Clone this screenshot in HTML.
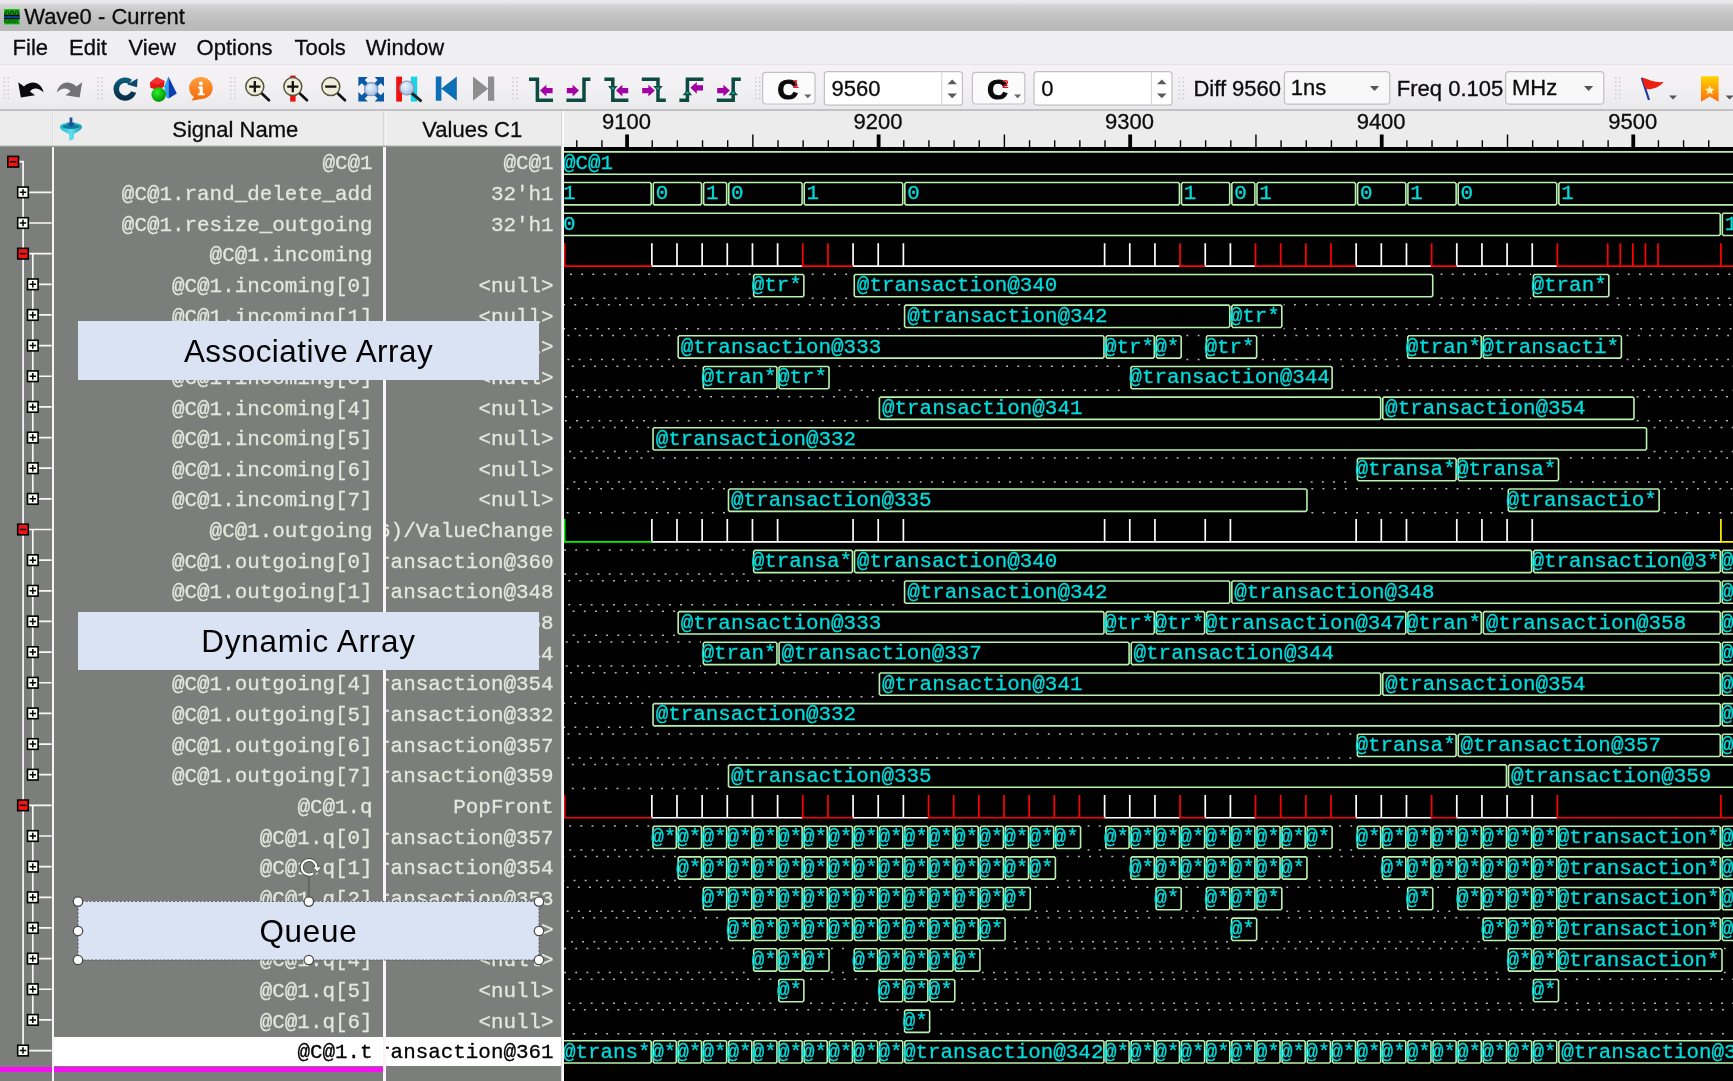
<!DOCTYPE html>
<html lang="en"><head><meta charset="utf-8"><title>Wave0 - Current</title>
<style>
html,body{margin:0;padding:0}
body{width:1733px;height:1081px;overflow:hidden;position:relative;background:#efeff1;font-family:"Liberation Sans", sans-serif;}
#app{position:absolute;left:0;top:0;width:1733px;height:1081px;overflow:hidden;will-change:transform;opacity:0.999}
.ui{position:absolute;font-family:"Liberation Sans", sans-serif;font-size:22px;line-height:25px;color:#0c0c0c;white-space:nowrap;-webkit-text-stroke:0.3px #0c0c0c}
.nm{position:absolute;left:54px;width:318.6px;text-align:right;font-family:"Liberation Mono", monospace;font-size:20.9px;line-height:25px;white-space:nowrap;height:25px;-webkit-text-stroke:0.3px currentColor}
.vl{position:absolute;left:385.8px;width:167.8px;height:25px;overflow:hidden;font-family:"Liberation Mono", monospace;font-size:20.9px;line-height:25px;white-space:nowrap;-webkit-text-stroke:0.3px currentColor}
.vl span{position:absolute;right:0;top:0}
.ann{position:absolute;left:78px;width:461px;background:#dae3f3;color:#000;text-align:center;font-family:"Liberation Sans", sans-serif;white-space:nowrap}
</style></head><body><div id="app">
<div style="position:absolute;left:0;top:0;width:1733px;height:31px;background:linear-gradient(180deg,#edeaee 0px,#e7e5e9 2.5px,#d3d3d4 5.5px,#c7c7c8 12px,#bcbcbd 22px,#b9b9ba 31px)"></div>
<div class="ui" style="left:24.2px;top:4.2px">Wave0 - Current</div>
<svg width="16" height="16" viewBox="0 0 16 16" style="position:absolute;left:4px;top:8.6px">
<rect x="0" y="0" width="15.6" height="15.4" fill="#12c812"/>
<path d="M0 4.4H2.2V2.2H4.6V4.4H6.9V2.2H9.3V4.4H11.6V2.2H14V4.4H15.6" fill="none" stroke="#0a5a0a" stroke-width="1.5"/>
<rect x="0" y="5.6" width="15.6" height="4.8" fill="#050a18"/>
<rect x="0" y="7.5" width="15.6" height="1.1" fill="#1f6cff"/>
<path d="M0.6 13.8V11.6H2.4V13.8H4.2V11.6H6V13.8H7.8V11.6H9.6V13.8H11.4V11.6H13.2V13.8H15" fill="none" stroke="#0a6a0a" stroke-width="1.3"/>
</svg>
<div style="position:absolute;left:0;top:31px;width:1733px;height:33.4px;background:#efeff1"></div>
<div class="ui" style="left:12.6px;top:34.8px">File</div>
<div class="ui" style="left:69px;top:34.8px">Edit</div>
<div class="ui" style="left:128.6px;top:34.8px">View</div>
<div class="ui" style="left:196.6px;top:34.8px">Options</div>
<div class="ui" style="left:294.4px;top:34.8px">Tools</div>
<div class="ui" style="left:365.8px;top:34.8px">Window</div>
<div style="position:absolute;left:0;top:64.4px;width:1733px;height:45.4px;background:linear-gradient(180deg,#dedde0 0,#f5f2f5 1.6px,#f3f1f4 40%,#eaeaec 100%)"></div>
<svg width="1733" height="46" viewBox="0 64 1733 46" style="position:absolute;left:0;top:64px"><defs>
<linearGradient id="og" x1="0" y1="0" x2="0" y2="1"><stop offset="0" stop-color="#ffa040"/><stop offset="1" stop-color="#f26a0c"/></linearGradient>
<linearGradient id="bk" x1="0" y1="0" x2="0" y2="1"><stop offset="0" stop-color="#ffd400"/><stop offset="0.55" stop-color="#ff9a08"/><stop offset="1" stop-color="#ff6a10"/></linearGradient>
<radialGradient id="gs" cx="0.4" cy="0.35" r="0.7"><stop offset="0" stop-color="#2cf02c"/><stop offset="1" stop-color="#008a00"/></radialGradient>
<radialGradient id="gl" cx="0.4" cy="0.35" r="0.8"><stop offset="0" stop-color="#eef6ff"/><stop offset="1" stop-color="#8fb4e0"/></radialGradient>
<linearGradient id="rf" x1="0" y1="0" x2="0" y2="1"><stop offset="0" stop-color="#0b5a78"/><stop offset="1" stop-color="#082e48"/></linearGradient>
</defs><g fill="#cbcbce"><rect x="3.6" y="77.2" width="1.5" height="1.5"/><rect x="7.6" y="77.2" width="1.5" height="1.5"/><rect x="3.6" y="81.3" width="1.5" height="1.5"/><rect x="7.6" y="81.3" width="1.5" height="1.5"/><rect x="3.6" y="85.4" width="1.5" height="1.5"/><rect x="7.6" y="85.4" width="1.5" height="1.5"/><rect x="3.6" y="89.5" width="1.5" height="1.5"/><rect x="7.6" y="89.5" width="1.5" height="1.5"/><rect x="3.6" y="93.6" width="1.5" height="1.5"/><rect x="7.6" y="93.6" width="1.5" height="1.5"/><rect x="3.6" y="97.7" width="1.5" height="1.5"/><rect x="7.6" y="97.7" width="1.5" height="1.5"/></g><g fill="#cbcbce"><rect x="97.4" y="77.2" width="1.5" height="1.5"/><rect x="101.4" y="77.2" width="1.5" height="1.5"/><rect x="97.4" y="81.3" width="1.5" height="1.5"/><rect x="101.4" y="81.3" width="1.5" height="1.5"/><rect x="97.4" y="85.4" width="1.5" height="1.5"/><rect x="101.4" y="85.4" width="1.5" height="1.5"/><rect x="97.4" y="89.5" width="1.5" height="1.5"/><rect x="101.4" y="89.5" width="1.5" height="1.5"/><rect x="97.4" y="93.6" width="1.5" height="1.5"/><rect x="101.4" y="93.6" width="1.5" height="1.5"/><rect x="97.4" y="97.7" width="1.5" height="1.5"/><rect x="101.4" y="97.7" width="1.5" height="1.5"/></g><g fill="#cbcbce"><rect x="230" y="77.2" width="1.5" height="1.5"/><rect x="234" y="77.2" width="1.5" height="1.5"/><rect x="230" y="81.3" width="1.5" height="1.5"/><rect x="234" y="81.3" width="1.5" height="1.5"/><rect x="230" y="85.4" width="1.5" height="1.5"/><rect x="234" y="85.4" width="1.5" height="1.5"/><rect x="230" y="89.5" width="1.5" height="1.5"/><rect x="234" y="89.5" width="1.5" height="1.5"/><rect x="230" y="93.6" width="1.5" height="1.5"/><rect x="234" y="93.6" width="1.5" height="1.5"/><rect x="230" y="97.7" width="1.5" height="1.5"/><rect x="234" y="97.7" width="1.5" height="1.5"/></g><g fill="#cbcbce"><rect x="512.4" y="77.2" width="1.5" height="1.5"/><rect x="516.4" y="77.2" width="1.5" height="1.5"/><rect x="512.4" y="81.3" width="1.5" height="1.5"/><rect x="516.4" y="81.3" width="1.5" height="1.5"/><rect x="512.4" y="85.4" width="1.5" height="1.5"/><rect x="516.4" y="85.4" width="1.5" height="1.5"/><rect x="512.4" y="89.5" width="1.5" height="1.5"/><rect x="516.4" y="89.5" width="1.5" height="1.5"/><rect x="512.4" y="93.6" width="1.5" height="1.5"/><rect x="516.4" y="93.6" width="1.5" height="1.5"/><rect x="512.4" y="97.7" width="1.5" height="1.5"/><rect x="516.4" y="97.7" width="1.5" height="1.5"/></g><g fill="#cbcbce"><rect x="755" y="77.2" width="1.5" height="1.5"/><rect x="759" y="77.2" width="1.5" height="1.5"/><rect x="755" y="81.3" width="1.5" height="1.5"/><rect x="759" y="81.3" width="1.5" height="1.5"/><rect x="755" y="85.4" width="1.5" height="1.5"/><rect x="759" y="85.4" width="1.5" height="1.5"/><rect x="755" y="89.5" width="1.5" height="1.5"/><rect x="759" y="89.5" width="1.5" height="1.5"/><rect x="755" y="93.6" width="1.5" height="1.5"/><rect x="759" y="93.6" width="1.5" height="1.5"/><rect x="755" y="97.7" width="1.5" height="1.5"/><rect x="759" y="97.7" width="1.5" height="1.5"/></g><g fill="#cbcbce"><rect x="1178.6" y="77.2" width="1.5" height="1.5"/><rect x="1182.6" y="77.2" width="1.5" height="1.5"/><rect x="1178.6" y="81.3" width="1.5" height="1.5"/><rect x="1182.6" y="81.3" width="1.5" height="1.5"/><rect x="1178.6" y="85.4" width="1.5" height="1.5"/><rect x="1182.6" y="85.4" width="1.5" height="1.5"/><rect x="1178.6" y="89.5" width="1.5" height="1.5"/><rect x="1182.6" y="89.5" width="1.5" height="1.5"/><rect x="1178.6" y="93.6" width="1.5" height="1.5"/><rect x="1182.6" y="93.6" width="1.5" height="1.5"/><rect x="1178.6" y="97.7" width="1.5" height="1.5"/><rect x="1182.6" y="97.7" width="1.5" height="1.5"/></g><g fill="#cbcbce"><rect x="1615" y="77.2" width="1.5" height="1.5"/><rect x="1619" y="77.2" width="1.5" height="1.5"/><rect x="1615" y="81.3" width="1.5" height="1.5"/><rect x="1619" y="81.3" width="1.5" height="1.5"/><rect x="1615" y="85.4" width="1.5" height="1.5"/><rect x="1619" y="85.4" width="1.5" height="1.5"/><rect x="1615" y="89.5" width="1.5" height="1.5"/><rect x="1619" y="89.5" width="1.5" height="1.5"/><rect x="1615" y="93.6" width="1.5" height="1.5"/><rect x="1619" y="93.6" width="1.5" height="1.5"/><rect x="1615" y="97.7" width="1.5" height="1.5"/><rect x="1619" y="97.7" width="1.5" height="1.5"/></g><path d="M18.2 82.2L20.8 97.4L35 95.2L30 91.6C32.4 87.6 38.4 87 43.6 92.6C42.2 84.6 33.6 78.2 24 86.4Z" fill="#0a0a0a"/><path d="M82.2 82.2L79.6 97.4L65.4 95.2L70.4 91.6C68 87.6 62 87 56.8 92.6C58.2 84.6 66.8 78.2 76.4 86.4Z" fill="#737373"/><path d="M130.4 82A8.9 8.9 0 1 0 133.6 92" fill="none" stroke="url(#rf)" stroke-width="5.4"/><path d="M137.6 78.4L137 87.2L127.2 84.6Z" fill="#0a4a68"/><path d="M168.4 76.6L164.2 86.6L166.4 97.8L168.6 98.6Z" fill="#28a8f4"/><path d="M168.4 76.6L168.6 98.6L176.8 93.4Z" fill="#0b3cb0"/><path d="M150 82.5L156.6 77.2L164.6 81.1L163.9 86.8L157.6 90.2L150.4 87.8Z" fill="#e81414"/><path d="M150 82.5L156.6 77.2L164.6 81.1L157.8 84.8Z" fill="#f43030"/><circle cx="158.7" cy="94.6" r="7.3" fill="url(#gs)"/><path d="M194.4 96.4L191.4 100.8L201 99Z" fill="#f26a0c"/><ellipse cx="200.9" cy="88" rx="11.8" ry="11.1" fill="url(#og)"/><circle cx="200.9" cy="83.6" r="2" fill="#fff"/><path d="M198.2 86.6H202.8V93.4H204.7V95.2H197.8V93.4H199.6V88.4H198.2Z" fill="#fff"/><path d="M261.0 92.8L269.0 100.19999999999999" stroke="#111" stroke-width="2.7" stroke-linecap="round"/><circle cx="254.8" cy="86.6" r="9" fill="#efedd9" stroke="#55553f" stroke-width="1.5"/><path d="M249.20000000000002 86.6H260.40000000000003M254.8 81.0V92.19999999999999" stroke="#111" stroke-width="2.3"/><rect x="290.2" y="75.6" width="5.4" height="26" fill="#f01010"/><path d="M299.0 92.8L307.0 100.19999999999999" stroke="#111" stroke-width="2.7" stroke-linecap="round"/><circle cx="292.8" cy="86.6" r="9" fill="#efedd9" stroke="#55553f" stroke-width="1.5"/><path d="M287.2 86.6H298.40000000000003M292.8 81.0V92.19999999999999" stroke="#111" stroke-width="2.3"/><path d="M337.0 92.8L345.0 100.19999999999999" stroke="#111" stroke-width="2.7" stroke-linecap="round"/><circle cx="330.8" cy="86.6" r="9" fill="#efedd9" stroke="#55553f" stroke-width="1.5"/><path d="M325.2 86.6H336.40000000000003" stroke="#111" stroke-width="2.3"/><path d="M358.4 77.0H367.79999999999995L358.4 86.4Z" fill="#0b5aa8"/><path d="M361.59999999999997 80.0L366.59999999999997 84.8" stroke="#0b5aa8" stroke-width="4.4"/><path d="M384.0 77.0H374.6L384.0 86.4Z" fill="#0b5aa8"/><path d="M380.8 80.0L375.8 84.8" stroke="#0b5aa8" stroke-width="4.4"/><path d="M358.4 101.4H367.79999999999995L358.4 92.0Z" fill="#0b5aa8"/><path d="M361.59999999999997 98.4L366.59999999999997 93.60000000000001" stroke="#0b5aa8" stroke-width="4.4"/><path d="M384.0 101.4H374.6L384.0 92.0Z" fill="#0b5aa8"/><path d="M380.8 98.4L375.8 93.60000000000001" stroke="#0b5aa8" stroke-width="4.4"/><circle cx="371.2" cy="89.2" r="6.6" fill="url(#gl)" stroke="#7a92b8" stroke-width="1.1"/><rect x="396.2" y="76.6" width="5.8" height="25" fill="#f01010"/><rect x="410.8" y="76.6" width="6.4" height="25" fill="#18d4e8"/><path d="M411.6 93L420.6 100.6" stroke="#222" stroke-width="3" stroke-linecap="round"/><circle cx="406.8" cy="88" r="7" fill="url(#gl)" stroke="#8a93a8" stroke-width="1.2"/><path d="M435.8 76.6H441.4V88.6L456.8 76.6V100.8L441.4 88.8V100.8H435.8Z" fill="#0b70b4"/><path d="M494.2 76.6H488V88.6L473 76.6V100.8L488 88.8V100.8H494.2Z" fill="#8e8e8e"/><path d="M529 79.2H537.4V100.2H553" fill="none" stroke="#0d4a42" stroke-width="3.5"/><path d="M540 90.6L546.4 84.69999999999999V88.0H552.6V93.19999999999999H546.4V96.5Z" fill="#a100a3"/><path d="M566.4 100.2H584.0V79.2H590.4" fill="none" stroke="#0d4a42" stroke-width="3.5"/><path d="M579.0 90.6L572.6 84.69999999999999V88.0H566.8V93.19999999999999H572.6V96.5Z" fill="#a100a3"/><path d="M604.4 79.2H612.8V100.2H628.4" fill="none" stroke="#0d4a42" stroke-width="3.5"/><path d="M608.0 86H617.6L612.8 91.5Z" fill="#0d4a42"/><path d="M610.8 87.4H614.8L612.8 89.8Z" fill="#14b8a6"/><path d="M616.0 90.6L622.4 84.69999999999999V88.0H628.1999999999999V93.19999999999999H622.4V96.5Z" fill="#a100a3"/><path d="M641.8 79.2H658.0V100.2H665.8" fill="none" stroke="#0d4a42" stroke-width="3.5"/><path d="M653.1999999999999 86H662.8L658.0 91.5Z" fill="#0d4a42"/><path d="M656.0 87.4H660.0L658.0 89.8Z" fill="#14b8a6"/><path d="M654.8 90.6L648.4 84.69999999999999V88.0H642.1999999999999V93.19999999999999H648.4V96.5Z" fill="#a100a3"/><path d="M679.4 100.2H687.4V79.2H703.4" fill="none" stroke="#0d4a42" stroke-width="3.5"/><path d="M682.6 95.2H692.1999999999999L687.4 89.6Z" fill="#0d4a42"/><path d="M685.4 93.8H689.4L687.4 91.4Z" fill="#14b8a6"/><path d="M690.4 87.8L696.8 81.89999999999999V85.2H703.0V90.39999999999999H696.8V93.7Z" fill="#a100a3"/><path d="M716.8 100.2H733.1999999999999V79.2H740.8" fill="none" stroke="#0d4a42" stroke-width="3.5"/><path d="M728.4 95.2H738.0L733.1999999999999 89.6Z" fill="#0d4a42"/><path d="M731.1999999999999 93.8H735.1999999999999L733.1999999999999 91.4Z" fill="#14b8a6"/><path d="M729.8 90.6L723.4 84.69999999999999V88.0H717.1999999999999V93.19999999999999H723.4V96.5Z" fill="#a100a3"/><rect x="762.6" y="72.4" width="52.4" height="31.6" rx="3.5" fill="#fbfbfb" stroke="#c2c2c4" stroke-width="1.2"/><text x="777.4" y="99.2" font-family='"Liberation Sans", sans-serif' font-weight="bold" font-size="28.5" fill="#0a0a0a" stroke="#0a0a0a" stroke-width="1.1">C</text><text x="792.4" y="87.6" font-family='"Liberation Sans", sans-serif' font-weight="bold" font-size="11.5" fill="#e8101c">1</text><path d="M804.2 94.6H811.4L807.8000000000001 98.2Z" fill="#666"/><rect x="824.4" y="71.6" width="138" height="33.6" rx="3" fill="#fff" stroke="#c0c0c2" stroke-width="1.2"/><path d="M941.8 72.2V104.6" stroke="#d2d2d4" stroke-width="1"/><text x="831.6" y="96.2" font-family='"Liberation Sans", sans-serif' font-size="22" fill="#0c0c0c" stroke="#0c0c0c" stroke-width="0.3">9560</text><path d="M947.4 84.2L952.1999999999999 79.4L956.9999999999999 84.2Z" fill="#5a5a5a"/><path d="M947.4 93.4L952.1999999999999 98.2L956.9999999999999 93.4Z" fill="#5a5a5a"/><rect x="972.4" y="72.4" width="52.4" height="31.6" rx="3.5" fill="#fbfbfb" stroke="#c2c2c4" stroke-width="1.2"/><text x="987.1999999999999" y="99.2" font-family='"Liberation Sans", sans-serif' font-weight="bold" font-size="28.5" fill="#0a0a0a" stroke="#0a0a0a" stroke-width="1.1">C</text><text x="1002.1999999999999" y="87.6" font-family='"Liberation Sans", sans-serif' font-weight="bold" font-size="11.5" fill="#e8101c">2</text><path d="M1014.0 94.6H1021.1999999999999L1017.6 98.2Z" fill="#666"/><rect x="1034" y="71.6" width="138" height="33.6" rx="3" fill="#fff" stroke="#c0c0c2" stroke-width="1.2"/><path d="M1151.4 72.2V104.6" stroke="#d2d2d4" stroke-width="1"/><text x="1041.2" y="96.2" font-family='"Liberation Sans", sans-serif' font-size="22" fill="#0c0c0c" stroke="#0c0c0c" stroke-width="0.3">0</text><path d="M1157.0 84.2L1161.8 79.4L1166.6 84.2Z" fill="#5a5a5a"/><path d="M1157.0 93.4L1161.8 98.2L1166.6 93.4Z" fill="#5a5a5a"/><text x="1193.4" y="96.4" font-family='"Liberation Sans", sans-serif' font-size="22" fill="#0c0c0c" stroke="#0c0c0c" stroke-width="0.3">Diff 9560</text><rect x="1284.4" y="71.6" width="105.4" height="32.6" rx="3.5" fill="#f8f8f9" stroke="#c0c0c2" stroke-width="1.2"/><text x="1290.8000000000002" y="95.2" font-family='"Liberation Sans", sans-serif' font-size="22" fill="#0c0c0c" stroke="#0c0c0c" stroke-width="0.3">1ns</text><path d="M1370.0000000000002 86L1374.6000000000001 91L1379.2 86Z" fill="#555"/><text x="1396.8" y="96.4" font-family='"Liberation Sans", sans-serif' font-size="22" fill="#0c0c0c" stroke="#0c0c0c" stroke-width="0.3">Freq 0.105</text><rect x="1505.6" y="71.6" width="98.2" height="32.6" rx="3.5" fill="#f8f8f9" stroke="#c0c0c2" stroke-width="1.2"/><text x="1512.0" y="95.2" font-family='"Liberation Sans", sans-serif' font-size="22" fill="#0c0c0c" stroke="#0c0c0c" stroke-width="0.3">MHz</text><path d="M1584.0 86L1588.6 91L1593.1999999999998 86Z" fill="#555"/><path d="M1641.8 77.8L1649 100" stroke="#1c3c9e" stroke-width="2.2"/><path d="M1641.6 77.4C1648 79 1656 83.4 1663.8 81.8C1660 87 1652 90.4 1645.6 88.8Z" fill="#ee2010"/><path d="M1669 95.6H1677L1673 99.6Z" fill="#555"/><path d="M1701 76.2H1718.6V101.8L1709.8 96.6L1701 101.8Z" fill="url(#bk)"/><path d="M1709.8 85.4L1711.2 88.6L1714.6 88.9L1712 91.2L1712.8 94.6L1709.8 92.8L1706.8 94.6L1707.6 91.2L1705 88.9L1708.4 88.6Z" fill="#fff3c0"/><path d="M1725.6 95.6H1733.6L1729.6 99.6Z" fill="#555"/></svg>
<div style="position:absolute;left:0;top:110.6px;width:1733px;height:36px;background:#ececec"></div>
<div style="position:absolute;left:0;top:109.2px;width:1733px;height:1.4px;background:#c2c2c2"></div>
<div style="position:absolute;left:51.7px;top:111px;width:2.7px;height:36px;background:linear-gradient(90deg,#d0d0d0,#fff)"></div>
<div style="position:absolute;left:383.2px;top:111px;width:2.5px;height:36px;background:linear-gradient(90deg,#d0d0d0,#fff)"></div>
<div class="ui" style="left:172.3px;top:117px">Signal Name</div>
<div class="ui" style="left:422.3px;top:117px">Values C1</div>
<svg width="1169" height="38" viewBox="564 110 1169 38" style="position:absolute;left:564px;top:110px" font-family='"Liberation Sans", sans-serif' font-size="22" fill="#0c0c0c" stroke="#0c0c0c" stroke-width="0.3"><path d="M576.76 140.2V148M601.92 140.2V148M652.23 140.2V148M677.38 140.2V148M702.54 140.2V148M727.69 140.2V148M778 140.2V148M803.16 140.2V148M828.31 140.2V148M853.47 140.2V148M903.78 140.2V148M928.93 140.2V148M954.09 140.2V148M979.24 140.2V148M1029.55 140.2V148M1054.7 140.2V148M1079.86 140.2V148M1105.02 140.2V148M1155.33 140.2V148M1180.48 140.2V148M1205.64 140.2V148M1230.79 140.2V148M1281.1 140.2V148M1306.26 140.2V148M1331.41 140.2V148M1356.57 140.2V148M1406.88 140.2V148M1432.03 140.2V148M1457.18 140.2V148M1482.34 140.2V148M1532.65 140.2V148M1557.81 140.2V148M1582.96 140.2V148M1608.12 140.2V148M1658.43 140.2V148M1683.58 140.2V148M1708.74 140.2V148M1733.89 140.2V148M752.85 134.4V148M1004.4 134.4V148M1255.95 134.4V148M1507.5 134.4V148" stroke="#000" stroke-width="1.4"/><path d="M627.07 134.4V148M878.62 134.4V148M1130.17 134.4V148M1381.72 134.4V148M1633.27 134.4V148" stroke="#000" stroke-width="3.8"/><text x="626.47" y="129.2" text-anchor="middle">9100</text><text x="878.02" y="129.2" text-anchor="middle">9200</text><text x="1129.57" y="129.2" text-anchor="middle">9300</text><text x="1381.12" y="129.2" text-anchor="middle">9400</text><text x="1632.67" y="129.2" text-anchor="middle">9500</text></svg>
<svg width="26" height="26" viewBox="0 0 26 26" style="position:absolute;left:58px;top:116px">
<defs><linearGradient id="fg" x1="0" x2="1"><stop offset="0" stop-color="#1fb6d0"/><stop offset="0.5" stop-color="#5fe0ee"/><stop offset="1" stop-color="#169db8"/></linearGradient></defs>
<path d="M2 11C2 8 7 6.5 13 6.5S24 8 24 11C24 14 18 16.5 16 18L15.5 23L11.5 25L11 18C8 16.5 2 14 2 11Z" fill="url(#fg)"/>
<ellipse cx="13" cy="10.5" rx="8.5" ry="2.6" fill="#0e7f9a"/>
<path d="M11.6 1.5H14.4V6.8H17.2L13 11.3L8.8 6.8H11.6Z" fill="#1a4f9c"/>
</svg>
<div style="position:absolute;left:0;top:147.2px;width:561px;height:933.8px;background:#7c7e7b"></div>
<div style="position:absolute;left:0;top:145.4px;width:561px;height:2px;background:linear-gradient(180deg,#ececec,#7c7e7b)"></div>
<div style="position:absolute;left:54px;top:1036.85px;width:507px;height:29.6px;background:#fff"></div>
<div style="position:absolute;left:0;top:1067.2px;width:383.5px;height:4.8px;background:#fb0cf6"></div>
<div style="position:absolute;left:51.7px;top:147.2px;width:2.7px;height:933.8px;background:#faf4fa"></div>
<div style="position:absolute;left:383.2px;top:147.2px;width:2.5px;height:933.8px;background:#faf4fa"></div>
<div style="position:absolute;left:561px;top:110.6px;width:3px;height:970.4px;background:linear-gradient(90deg,#c8c8c8,#fff 60%)"></div>
<div class="nm" style="top:151.3px;color:#e2e8dc">@C@1</div>
<div class="vl" style="top:151.3px;color:#e2e8dc"><span>@C@1</span></div>
<div class="nm" style="top:181.95px;color:#e2e8dc">@C@1.rand_delete_add</div>
<div class="vl" style="top:181.95px;color:#e2e8dc"><span>32'h1</span></div>
<div class="nm" style="top:212.6px;color:#e2e8dc">@C@1.resize_outgoing</div>
<div class="vl" style="top:212.6px;color:#e2e8dc"><span>32'h1</span></div>
<div class="nm" style="top:243.25px;color:#e2e8dc">@C@1.incoming</div>
<div class="nm" style="top:273.9px;color:#e2e8dc">@C@1.incoming[0]</div>
<div class="vl" style="top:273.9px;color:#e2e8dc"><span>&lt;null&gt;</span></div>
<div class="nm" style="top:304.55px;color:#e2e8dc">@C@1.incoming[1]</div>
<div class="vl" style="top:304.55px;color:#e2e8dc"><span>&lt;null&gt;</span></div>
<div class="nm" style="top:335.2px;color:#e2e8dc">@C@1.incoming[2]</div>
<div class="vl" style="top:335.2px;color:#e2e8dc"><span>&lt;null&gt;</span></div>
<div class="nm" style="top:365.85px;color:#e2e8dc">@C@1.incoming[3]</div>
<div class="vl" style="top:365.85px;color:#e2e8dc"><span>&lt;null&gt;</span></div>
<div class="nm" style="top:396.5px;color:#e2e8dc">@C@1.incoming[4]</div>
<div class="vl" style="top:396.5px;color:#e2e8dc"><span>&lt;null&gt;</span></div>
<div class="nm" style="top:427.15px;color:#e2e8dc">@C@1.incoming[5]</div>
<div class="vl" style="top:427.15px;color:#e2e8dc"><span>&lt;null&gt;</span></div>
<div class="nm" style="top:457.8px;color:#e2e8dc">@C@1.incoming[6]</div>
<div class="vl" style="top:457.8px;color:#e2e8dc"><span>&lt;null&gt;</span></div>
<div class="nm" style="top:488.45px;color:#e2e8dc">@C@1.incoming[7]</div>
<div class="vl" style="top:488.45px;color:#e2e8dc"><span>&lt;null&gt;</span></div>
<div class="nm" style="top:519.1px;color:#e2e8dc">@C@1.outgoing</div>
<div class="vl" style="top:519.1px;color:#e2e8dc"><span>(@transaction@356)/ValueChange</span></div>
<div class="nm" style="top:549.75px;color:#e2e8dc">@C@1.outgoing[0]</div>
<div class="vl" style="top:549.75px;color:#e2e8dc"><span>@transaction@360</span></div>
<div class="nm" style="top:580.4px;color:#e2e8dc">@C@1.outgoing[1]</div>
<div class="vl" style="top:580.4px;color:#e2e8dc"><span>@transaction@348</span></div>
<div class="nm" style="top:611.05px;color:#e2e8dc">@C@1.outgoing[2]</div>
<div class="vl" style="top:611.05px;color:#e2e8dc"><span>@transaction@358</span></div>
<div class="nm" style="top:641.7px;color:#e2e8dc">@C@1.outgoing[3]</div>
<div class="vl" style="top:641.7px;color:#e2e8dc"><span>@transaction@344</span></div>
<div class="nm" style="top:672.35px;color:#e2e8dc">@C@1.outgoing[4]</div>
<div class="vl" style="top:672.35px;color:#e2e8dc"><span>@transaction@354</span></div>
<div class="nm" style="top:703px;color:#e2e8dc">@C@1.outgoing[5]</div>
<div class="vl" style="top:703px;color:#e2e8dc"><span>@transaction@332</span></div>
<div class="nm" style="top:733.65px;color:#e2e8dc">@C@1.outgoing[6]</div>
<div class="vl" style="top:733.65px;color:#e2e8dc"><span>@transaction@357</span></div>
<div class="nm" style="top:764.3px;color:#e2e8dc">@C@1.outgoing[7]</div>
<div class="vl" style="top:764.3px;color:#e2e8dc"><span>@transaction@359</span></div>
<div class="nm" style="top:794.95px;color:#e2e8dc">@C@1.q</div>
<div class="vl" style="top:794.95px;color:#e2e8dc"><span>PopFront</span></div>
<div class="nm" style="top:825.6px;color:#e2e8dc">@C@1.q[0]</div>
<div class="vl" style="top:825.6px;color:#e2e8dc"><span>@transaction@357</span></div>
<div class="nm" style="top:856.25px;color:#e2e8dc">@C@1.q[1]</div>
<div class="vl" style="top:856.25px;color:#e2e8dc"><span>@transaction@354</span></div>
<div class="nm" style="top:886.9px;color:#e2e8dc">@C@1.q[2]</div>
<div class="vl" style="top:886.9px;color:#e2e8dc"><span>@transaction@353</span></div>
<div class="nm" style="top:917.55px;color:#e2e8dc">@C@1.q[3]</div>
<div class="vl" style="top:917.55px;color:#e2e8dc"><span>&lt;null&gt;</span></div>
<div class="nm" style="top:948.2px;color:#e2e8dc">@C@1.q[4]</div>
<div class="vl" style="top:948.2px;color:#e2e8dc"><span>&lt;null&gt;</span></div>
<div class="nm" style="top:978.85px;color:#e2e8dc">@C@1.q[5]</div>
<div class="vl" style="top:978.85px;color:#e2e8dc"><span>&lt;null&gt;</span></div>
<div class="nm" style="top:1009.5px;color:#e2e8dc">@C@1.q[6]</div>
<div class="vl" style="top:1009.5px;color:#e2e8dc"><span>&lt;null&gt;</span></div>
<div class="nm" style="top:1040.15px;color:#000">@C@1.t</div>
<div class="vl" style="top:1040.15px;color:#000"><span>@transaction@361</span></div>
<svg width="52" height="933.8" viewBox="0 147.2 52 933.8" style="position:absolute;left:0;top:147.2px"><path d="M19 161.9H23.1V1050.75M23.1 192.55H51.6M23.1 223.2H51.6M23.1 1050.75H51.6M23.1 253.85H51.6M32.8 253.85V499.05M32.8 284.5H51.6M32.8 315.15H51.6M32.8 345.8H51.6M32.8 376.45H51.6M32.8 407.1H51.6M32.8 437.75H51.6M32.8 468.4H51.6M32.8 499.05H51.6M23.1 529.7H51.6M32.8 529.7V774.9M32.8 560.35H51.6M32.8 591H51.6M32.8 621.65H51.6M32.8 652.3H51.6M32.8 682.95H51.6M32.8 713.6H51.6M32.8 744.25H51.6M32.8 774.9H51.6M23.1 805.55H51.6M32.8 805.55V1020.1M32.8 836.2H51.6M32.8 866.85H51.6M32.8 897.5H51.6M32.8 928.15H51.6M32.8 958.8H51.6M32.8 989.45H51.6M32.8 1020.1H51.6" stroke="#fbf6fb" stroke-width="1.7" fill="none"/><rect x="7.9" y="156.6" width="10.6" height="10.6" fill="#f51414" stroke="#000" stroke-width="1.6"/><path d="M10 161.9H16.4" stroke="#000" stroke-width="1.5" fill="none"/><rect x="17.7" y="187.25" width="10.6" height="10.6" fill="#fff" stroke="#000" stroke-width="1.6"/><path d="M19.8 192.55H26.2M23 189.35V195.75" stroke="#000" stroke-width="1.5" fill="none"/><rect x="17.7" y="217.9" width="10.6" height="10.6" fill="#fff" stroke="#000" stroke-width="1.6"/><path d="M19.8 223.2H26.2M23 220V226.4" stroke="#000" stroke-width="1.5" fill="none"/><rect x="17.7" y="1045.45" width="10.6" height="10.6" fill="#fff" stroke="#000" stroke-width="1.6"/><path d="M19.8 1050.75H26.2M23 1047.55V1053.95" stroke="#000" stroke-width="1.5" fill="none"/><rect x="17.7" y="248.55" width="10.6" height="10.6" fill="#f51414" stroke="#000" stroke-width="1.6"/><path d="M19.8 253.85H26.2" stroke="#000" stroke-width="1.5" fill="none"/><rect x="27.5" y="279.2" width="10.6" height="10.6" fill="#fff" stroke="#000" stroke-width="1.6"/><path d="M29.6 284.5H36M32.8 281.3V287.7" stroke="#000" stroke-width="1.5" fill="none"/><rect x="27.5" y="309.85" width="10.6" height="10.6" fill="#fff" stroke="#000" stroke-width="1.6"/><path d="M29.6 315.15H36M32.8 311.95V318.35" stroke="#000" stroke-width="1.5" fill="none"/><rect x="27.5" y="340.5" width="10.6" height="10.6" fill="#fff" stroke="#000" stroke-width="1.6"/><path d="M29.6 345.8H36M32.8 342.6V349" stroke="#000" stroke-width="1.5" fill="none"/><rect x="27.5" y="371.15" width="10.6" height="10.6" fill="#fff" stroke="#000" stroke-width="1.6"/><path d="M29.6 376.45H36M32.8 373.25V379.65" stroke="#000" stroke-width="1.5" fill="none"/><rect x="27.5" y="401.8" width="10.6" height="10.6" fill="#fff" stroke="#000" stroke-width="1.6"/><path d="M29.6 407.1H36M32.8 403.9V410.3" stroke="#000" stroke-width="1.5" fill="none"/><rect x="27.5" y="432.45" width="10.6" height="10.6" fill="#fff" stroke="#000" stroke-width="1.6"/><path d="M29.6 437.75H36M32.8 434.55V440.95" stroke="#000" stroke-width="1.5" fill="none"/><rect x="27.5" y="463.1" width="10.6" height="10.6" fill="#fff" stroke="#000" stroke-width="1.6"/><path d="M29.6 468.4H36M32.8 465.2V471.6" stroke="#000" stroke-width="1.5" fill="none"/><rect x="27.5" y="493.75" width="10.6" height="10.6" fill="#fff" stroke="#000" stroke-width="1.6"/><path d="M29.6 499.05H36M32.8 495.85V502.25" stroke="#000" stroke-width="1.5" fill="none"/><rect x="17.7" y="524.4" width="10.6" height="10.6" fill="#f51414" stroke="#000" stroke-width="1.6"/><path d="M19.8 529.7H26.2" stroke="#000" stroke-width="1.5" fill="none"/><rect x="27.5" y="555.05" width="10.6" height="10.6" fill="#fff" stroke="#000" stroke-width="1.6"/><path d="M29.6 560.35H36M32.8 557.15V563.55" stroke="#000" stroke-width="1.5" fill="none"/><rect x="27.5" y="585.7" width="10.6" height="10.6" fill="#fff" stroke="#000" stroke-width="1.6"/><path d="M29.6 591H36M32.8 587.8V594.2" stroke="#000" stroke-width="1.5" fill="none"/><rect x="27.5" y="616.35" width="10.6" height="10.6" fill="#fff" stroke="#000" stroke-width="1.6"/><path d="M29.6 621.65H36M32.8 618.45V624.85" stroke="#000" stroke-width="1.5" fill="none"/><rect x="27.5" y="647" width="10.6" height="10.6" fill="#fff" stroke="#000" stroke-width="1.6"/><path d="M29.6 652.3H36M32.8 649.1V655.5" stroke="#000" stroke-width="1.5" fill="none"/><rect x="27.5" y="677.65" width="10.6" height="10.6" fill="#fff" stroke="#000" stroke-width="1.6"/><path d="M29.6 682.95H36M32.8 679.75V686.15" stroke="#000" stroke-width="1.5" fill="none"/><rect x="27.5" y="708.3" width="10.6" height="10.6" fill="#fff" stroke="#000" stroke-width="1.6"/><path d="M29.6 713.6H36M32.8 710.4V716.8" stroke="#000" stroke-width="1.5" fill="none"/><rect x="27.5" y="738.95" width="10.6" height="10.6" fill="#fff" stroke="#000" stroke-width="1.6"/><path d="M29.6 744.25H36M32.8 741.05V747.45" stroke="#000" stroke-width="1.5" fill="none"/><rect x="27.5" y="769.6" width="10.6" height="10.6" fill="#fff" stroke="#000" stroke-width="1.6"/><path d="M29.6 774.9H36M32.8 771.7V778.1" stroke="#000" stroke-width="1.5" fill="none"/><rect x="17.7" y="800.25" width="10.6" height="10.6" fill="#f51414" stroke="#000" stroke-width="1.6"/><path d="M19.8 805.55H26.2" stroke="#000" stroke-width="1.5" fill="none"/><rect x="27.5" y="830.9" width="10.6" height="10.6" fill="#fff" stroke="#000" stroke-width="1.6"/><path d="M29.6 836.2H36M32.8 833V839.4" stroke="#000" stroke-width="1.5" fill="none"/><rect x="27.5" y="861.55" width="10.6" height="10.6" fill="#fff" stroke="#000" stroke-width="1.6"/><path d="M29.6 866.85H36M32.8 863.65V870.05" stroke="#000" stroke-width="1.5" fill="none"/><rect x="27.5" y="892.2" width="10.6" height="10.6" fill="#fff" stroke="#000" stroke-width="1.6"/><path d="M29.6 897.5H36M32.8 894.3V900.7" stroke="#000" stroke-width="1.5" fill="none"/><rect x="27.5" y="922.85" width="10.6" height="10.6" fill="#fff" stroke="#000" stroke-width="1.6"/><path d="M29.6 928.15H36M32.8 924.95V931.35" stroke="#000" stroke-width="1.5" fill="none"/><rect x="27.5" y="953.5" width="10.6" height="10.6" fill="#fff" stroke="#000" stroke-width="1.6"/><path d="M29.6 958.8H36M32.8 955.6V962" stroke="#000" stroke-width="1.5" fill="none"/><rect x="27.5" y="984.15" width="10.6" height="10.6" fill="#fff" stroke="#000" stroke-width="1.6"/><path d="M29.6 989.45H36M32.8 986.25V992.65" stroke="#000" stroke-width="1.5" fill="none"/><rect x="27.5" y="1014.8" width="10.6" height="10.6" fill="#fff" stroke="#000" stroke-width="1.6"/><path d="M29.6 1020.1H36M32.8 1016.9V1023.3" stroke="#000" stroke-width="1.5" fill="none"/></svg>
<svg width="1169" height="934.4" viewBox="0 146.6 1169 934.4" style="position:absolute;left:564px;top:146.6px;background:#000;overflow:hidden" font-family='"Liberation Mono", monospace' font-size="20.9" fill="#00dcdc" stroke="#00dcdc" stroke-width="0.3">
<defs><pattern id="dots" width="11.17" height="40" patternUnits="userSpaceOnUse"><rect x="0" y="0" width="1.9" height="1.5" fill="#b4b4b4"/></pattern></defs>
<line x1="0" x2="187.35" y1="273.8" y2="273.8" stroke="#b8b8b8" stroke-width="1.5" stroke-dasharray="1.9 9.27" stroke-dashoffset="-6.03"/>
<line x1="0" x2="187.35" y1="297.8" y2="297.8" stroke="#b8b8b8" stroke-width="1.5" stroke-dasharray="1.9 9.27" stroke-dashoffset="-6.03"/>
<line x1="241.66" x2="287.97" y1="273.8" y2="273.8" stroke="#b8b8b8" stroke-width="1.5" stroke-dasharray="1.9 9.27" stroke-dashoffset="-6.03"/>
<line x1="241.66" x2="287.97" y1="297.8" y2="297.8" stroke="#b8b8b8" stroke-width="1.5" stroke-dasharray="1.9 9.27" stroke-dashoffset="-6.03"/>
<line x1="870.53" x2="967.15" y1="273.8" y2="273.8" stroke="#b8b8b8" stroke-width="1.5" stroke-dasharray="1.9 9.27" stroke-dashoffset="-6.03"/>
<line x1="870.53" x2="967.15" y1="297.8" y2="297.8" stroke="#b8b8b8" stroke-width="1.5" stroke-dasharray="1.9 9.27" stroke-dashoffset="-6.03"/>
<line x1="1046.62" x2="1169" y1="273.8" y2="273.8" stroke="#b8b8b8" stroke-width="1.5" stroke-dasharray="1.9 9.27" stroke-dashoffset="-6.03"/>
<line x1="1046.62" x2="1169" y1="297.8" y2="297.8" stroke="#b8b8b8" stroke-width="1.5" stroke-dasharray="1.9 9.27" stroke-dashoffset="-6.03"/>
<line x1="0" x2="338.28" y1="304.45" y2="304.45" stroke="#b8b8b8" stroke-width="1.5" stroke-dasharray="1.9 9.27" stroke-dashoffset="-10.33"/>
<line x1="0" x2="338.28" y1="328.45" y2="328.45" stroke="#b8b8b8" stroke-width="1.5" stroke-dasharray="1.9 9.27" stroke-dashoffset="-10.33"/>
<line x1="719.6" x2="1169" y1="304.45" y2="304.45" stroke="#b8b8b8" stroke-width="1.5" stroke-dasharray="1.9 9.27" stroke-dashoffset="-10.33"/>
<line x1="719.6" x2="1169" y1="328.45" y2="328.45" stroke="#b8b8b8" stroke-width="1.5" stroke-dasharray="1.9 9.27" stroke-dashoffset="-10.33"/>
<line x1="0" x2="111.88" y1="335.1" y2="335.1" stroke="#b8b8b8" stroke-width="1.5" stroke-dasharray="1.9 9.27" stroke-dashoffset="-3.46"/>
<line x1="0" x2="111.88" y1="359.1" y2="359.1" stroke="#b8b8b8" stroke-width="1.5" stroke-dasharray="1.9 9.27" stroke-dashoffset="-3.46"/>
<line x1="618.98" x2="640.14" y1="335.1" y2="335.1" stroke="#b8b8b8" stroke-width="1.5" stroke-dasharray="1.9 9.27" stroke-dashoffset="-3.46"/>
<line x1="618.98" x2="640.14" y1="359.1" y2="359.1" stroke="#b8b8b8" stroke-width="1.5" stroke-dasharray="1.9 9.27" stroke-dashoffset="-3.46"/>
<line x1="694.45" x2="841.38" y1="335.1" y2="335.1" stroke="#b8b8b8" stroke-width="1.5" stroke-dasharray="1.9 9.27" stroke-dashoffset="-3.46"/>
<line x1="694.45" x2="841.38" y1="359.1" y2="359.1" stroke="#b8b8b8" stroke-width="1.5" stroke-dasharray="1.9 9.27" stroke-dashoffset="-3.46"/>
<line x1="1059.19" x2="1169" y1="335.1" y2="335.1" stroke="#b8b8b8" stroke-width="1.5" stroke-dasharray="1.9 9.27" stroke-dashoffset="-3.46"/>
<line x1="1059.19" x2="1169" y1="359.1" y2="359.1" stroke="#b8b8b8" stroke-width="1.5" stroke-dasharray="1.9 9.27" stroke-dashoffset="-3.46"/>
<line x1="0" x2="137.04" y1="365.75" y2="365.75" stroke="#b8b8b8" stroke-width="1.5" stroke-dasharray="1.9 9.27" stroke-dashoffset="-7.76"/>
<line x1="0" x2="137.04" y1="389.75" y2="389.75" stroke="#b8b8b8" stroke-width="1.5" stroke-dasharray="1.9 9.27" stroke-dashoffset="-7.76"/>
<line x1="266.81" x2="564.67" y1="365.75" y2="365.75" stroke="#b8b8b8" stroke-width="1.5" stroke-dasharray="1.9 9.27" stroke-dashoffset="-7.76"/>
<line x1="266.81" x2="564.67" y1="389.75" y2="389.75" stroke="#b8b8b8" stroke-width="1.5" stroke-dasharray="1.9 9.27" stroke-dashoffset="-7.76"/>
<line x1="769.91" x2="1169" y1="365.75" y2="365.75" stroke="#b8b8b8" stroke-width="1.5" stroke-dasharray="1.9 9.27" stroke-dashoffset="-7.76"/>
<line x1="769.91" x2="1169" y1="389.75" y2="389.75" stroke="#b8b8b8" stroke-width="1.5" stroke-dasharray="1.9 9.27" stroke-dashoffset="-7.76"/>
<line x1="0" x2="313.12" y1="396.4" y2="396.4" stroke="#b8b8b8" stroke-width="1.5" stroke-dasharray="1.9 9.27" stroke-dashoffset="-0.89"/>
<line x1="0" x2="313.12" y1="420.4" y2="420.4" stroke="#b8b8b8" stroke-width="1.5" stroke-dasharray="1.9 9.27" stroke-dashoffset="-0.89"/>
<line x1="1071.77" x2="1169" y1="396.4" y2="396.4" stroke="#b8b8b8" stroke-width="1.5" stroke-dasharray="1.9 9.27" stroke-dashoffset="-0.89"/>
<line x1="1071.77" x2="1169" y1="420.4" y2="420.4" stroke="#b8b8b8" stroke-width="1.5" stroke-dasharray="1.9 9.27" stroke-dashoffset="-0.89"/>
<line x1="0" x2="86.73" y1="427.05" y2="427.05" stroke="#b8b8b8" stroke-width="1.5" stroke-dasharray="1.9 9.27" stroke-dashoffset="-5.19"/>
<line x1="0" x2="86.73" y1="451.05" y2="451.05" stroke="#b8b8b8" stroke-width="1.5" stroke-dasharray="1.9 9.27" stroke-dashoffset="-5.19"/>
<line x1="1084.35" x2="1169" y1="427.05" y2="427.05" stroke="#b8b8b8" stroke-width="1.5" stroke-dasharray="1.9 9.27" stroke-dashoffset="-5.19"/>
<line x1="1084.35" x2="1169" y1="451.05" y2="451.05" stroke="#b8b8b8" stroke-width="1.5" stroke-dasharray="1.9 9.27" stroke-dashoffset="-5.19"/>
<line x1="0" x2="791.07" y1="457.7" y2="457.7" stroke="#b8b8b8" stroke-width="1.5" stroke-dasharray="1.9 9.27" stroke-dashoffset="-9.49"/>
<line x1="0" x2="791.07" y1="481.7" y2="481.7" stroke="#b8b8b8" stroke-width="1.5" stroke-dasharray="1.9 9.27" stroke-dashoffset="-9.49"/>
<line x1="996.31" x2="1169" y1="457.7" y2="457.7" stroke="#b8b8b8" stroke-width="1.5" stroke-dasharray="1.9 9.27" stroke-dashoffset="-9.49"/>
<line x1="996.31" x2="1169" y1="481.7" y2="481.7" stroke="#b8b8b8" stroke-width="1.5" stroke-dasharray="1.9 9.27" stroke-dashoffset="-9.49"/>
<line x1="0" x2="162.19" y1="488.35" y2="488.35" stroke="#b8b8b8" stroke-width="1.5" stroke-dasharray="1.9 9.27" stroke-dashoffset="-2.62"/>
<line x1="0" x2="162.19" y1="512.35" y2="512.35" stroke="#b8b8b8" stroke-width="1.5" stroke-dasharray="1.9 9.27" stroke-dashoffset="-2.62"/>
<line x1="744.76" x2="942" y1="488.35" y2="488.35" stroke="#b8b8b8" stroke-width="1.5" stroke-dasharray="1.9 9.27" stroke-dashoffset="-2.62"/>
<line x1="744.76" x2="942" y1="512.35" y2="512.35" stroke="#b8b8b8" stroke-width="1.5" stroke-dasharray="1.9 9.27" stroke-dashoffset="-2.62"/>
<line x1="1096.93" x2="1169" y1="488.35" y2="488.35" stroke="#b8b8b8" stroke-width="1.5" stroke-dasharray="1.9 9.27" stroke-dashoffset="-2.62"/>
<line x1="1096.93" x2="1169" y1="512.35" y2="512.35" stroke="#b8b8b8" stroke-width="1.5" stroke-dasharray="1.9 9.27" stroke-dashoffset="-2.62"/>
<line x1="0" x2="187.35" y1="549.65" y2="549.65" stroke="#b8b8b8" stroke-width="1.5" stroke-dasharray="1.9 9.27" stroke-dashoffset="-0.05"/>
<line x1="0" x2="187.35" y1="573.65" y2="573.65" stroke="#b8b8b8" stroke-width="1.5" stroke-dasharray="1.9 9.27" stroke-dashoffset="-0.05"/>
<line x1="0" x2="338.28" y1="580.3" y2="580.3" stroke="#b8b8b8" stroke-width="1.5" stroke-dasharray="1.9 9.27" stroke-dashoffset="-4.35"/>
<line x1="0" x2="338.28" y1="604.3" y2="604.3" stroke="#b8b8b8" stroke-width="1.5" stroke-dasharray="1.9 9.27" stroke-dashoffset="-4.35"/>
<line x1="0" x2="111.88" y1="610.95" y2="610.95" stroke="#b8b8b8" stroke-width="1.5" stroke-dasharray="1.9 9.27" stroke-dashoffset="-8.65"/>
<line x1="0" x2="111.88" y1="634.95" y2="634.95" stroke="#b8b8b8" stroke-width="1.5" stroke-dasharray="1.9 9.27" stroke-dashoffset="-8.65"/>
<line x1="0" x2="137.04" y1="641.6" y2="641.6" stroke="#b8b8b8" stroke-width="1.5" stroke-dasharray="1.9 9.27" stroke-dashoffset="-1.78"/>
<line x1="0" x2="137.04" y1="665.6" y2="665.6" stroke="#b8b8b8" stroke-width="1.5" stroke-dasharray="1.9 9.27" stroke-dashoffset="-1.78"/>
<line x1="0" x2="313.12" y1="672.25" y2="672.25" stroke="#b8b8b8" stroke-width="1.5" stroke-dasharray="1.9 9.27" stroke-dashoffset="-6.08"/>
<line x1="0" x2="313.12" y1="696.25" y2="696.25" stroke="#b8b8b8" stroke-width="1.5" stroke-dasharray="1.9 9.27" stroke-dashoffset="-6.08"/>
<line x1="0" x2="86.73" y1="702.9" y2="702.9" stroke="#b8b8b8" stroke-width="1.5" stroke-dasharray="1.9 9.27" stroke-dashoffset="-10.38"/>
<line x1="0" x2="86.73" y1="726.9" y2="726.9" stroke="#b8b8b8" stroke-width="1.5" stroke-dasharray="1.9 9.27" stroke-dashoffset="-10.38"/>
<line x1="0" x2="791.07" y1="733.55" y2="733.55" stroke="#b8b8b8" stroke-width="1.5" stroke-dasharray="1.9 9.27" stroke-dashoffset="-3.51"/>
<line x1="0" x2="791.07" y1="757.55" y2="757.55" stroke="#b8b8b8" stroke-width="1.5" stroke-dasharray="1.9 9.27" stroke-dashoffset="-3.51"/>
<line x1="0" x2="162.19" y1="764.2" y2="764.2" stroke="#b8b8b8" stroke-width="1.5" stroke-dasharray="1.9 9.27" stroke-dashoffset="-7.81"/>
<line x1="0" x2="162.19" y1="788.2" y2="788.2" stroke="#b8b8b8" stroke-width="1.5" stroke-dasharray="1.9 9.27" stroke-dashoffset="-7.81"/>
<line x1="0" x2="86.73" y1="825.5" y2="825.5" stroke="#b8b8b8" stroke-width="1.5" stroke-dasharray="1.9 9.27" stroke-dashoffset="-5.24"/>
<line x1="0" x2="86.73" y1="849.5" y2="849.5" stroke="#b8b8b8" stroke-width="1.5" stroke-dasharray="1.9 9.27" stroke-dashoffset="-5.24"/>
<line x1="518.36" x2="539.52" y1="825.5" y2="825.5" stroke="#b8b8b8" stroke-width="1.5" stroke-dasharray="1.9 9.27" stroke-dashoffset="-5.24"/>
<line x1="518.36" x2="539.52" y1="849.5" y2="849.5" stroke="#b8b8b8" stroke-width="1.5" stroke-dasharray="1.9 9.27" stroke-dashoffset="-5.24"/>
<line x1="769.91" x2="791.07" y1="825.5" y2="825.5" stroke="#b8b8b8" stroke-width="1.5" stroke-dasharray="1.9 9.27" stroke-dashoffset="-5.24"/>
<line x1="769.91" x2="791.07" y1="849.5" y2="849.5" stroke="#b8b8b8" stroke-width="1.5" stroke-dasharray="1.9 9.27" stroke-dashoffset="-5.24"/>
<line x1="0" x2="111.88" y1="856.15" y2="856.15" stroke="#b8b8b8" stroke-width="1.5" stroke-dasharray="1.9 9.27" stroke-dashoffset="-9.54"/>
<line x1="0" x2="111.88" y1="880.15" y2="880.15" stroke="#b8b8b8" stroke-width="1.5" stroke-dasharray="1.9 9.27" stroke-dashoffset="-9.54"/>
<line x1="493.2" x2="564.67" y1="856.15" y2="856.15" stroke="#b8b8b8" stroke-width="1.5" stroke-dasharray="1.9 9.27" stroke-dashoffset="-9.54"/>
<line x1="493.2" x2="564.67" y1="880.15" y2="880.15" stroke="#b8b8b8" stroke-width="1.5" stroke-dasharray="1.9 9.27" stroke-dashoffset="-9.54"/>
<line x1="744.76" x2="816.22" y1="856.15" y2="856.15" stroke="#b8b8b8" stroke-width="1.5" stroke-dasharray="1.9 9.27" stroke-dashoffset="-9.54"/>
<line x1="744.76" x2="816.22" y1="880.15" y2="880.15" stroke="#b8b8b8" stroke-width="1.5" stroke-dasharray="1.9 9.27" stroke-dashoffset="-9.54"/>
<line x1="0" x2="137.04" y1="886.8" y2="886.8" stroke="#b8b8b8" stroke-width="1.5" stroke-dasharray="1.9 9.27" stroke-dashoffset="-2.67"/>
<line x1="0" x2="137.04" y1="910.8" y2="910.8" stroke="#b8b8b8" stroke-width="1.5" stroke-dasharray="1.9 9.27" stroke-dashoffset="-2.67"/>
<line x1="468.05" x2="589.83" y1="886.8" y2="886.8" stroke="#b8b8b8" stroke-width="1.5" stroke-dasharray="1.9 9.27" stroke-dashoffset="-2.67"/>
<line x1="468.05" x2="589.83" y1="910.8" y2="910.8" stroke="#b8b8b8" stroke-width="1.5" stroke-dasharray="1.9 9.27" stroke-dashoffset="-2.67"/>
<line x1="618.98" x2="640.14" y1="886.8" y2="886.8" stroke="#b8b8b8" stroke-width="1.5" stroke-dasharray="1.9 9.27" stroke-dashoffset="-2.67"/>
<line x1="618.98" x2="640.14" y1="910.8" y2="910.8" stroke="#b8b8b8" stroke-width="1.5" stroke-dasharray="1.9 9.27" stroke-dashoffset="-2.67"/>
<line x1="719.6" x2="841.38" y1="886.8" y2="886.8" stroke="#b8b8b8" stroke-width="1.5" stroke-dasharray="1.9 9.27" stroke-dashoffset="-2.67"/>
<line x1="719.6" x2="841.38" y1="910.8" y2="910.8" stroke="#b8b8b8" stroke-width="1.5" stroke-dasharray="1.9 9.27" stroke-dashoffset="-2.67"/>
<line x1="870.53" x2="891.68" y1="886.8" y2="886.8" stroke="#b8b8b8" stroke-width="1.5" stroke-dasharray="1.9 9.27" stroke-dashoffset="-2.67"/>
<line x1="870.53" x2="891.68" y1="910.8" y2="910.8" stroke="#b8b8b8" stroke-width="1.5" stroke-dasharray="1.9 9.27" stroke-dashoffset="-2.67"/>
<line x1="0" x2="162.19" y1="917.45" y2="917.45" stroke="#b8b8b8" stroke-width="1.5" stroke-dasharray="1.9 9.27" stroke-dashoffset="-6.97"/>
<line x1="0" x2="162.19" y1="941.45" y2="941.45" stroke="#b8b8b8" stroke-width="1.5" stroke-dasharray="1.9 9.27" stroke-dashoffset="-6.97"/>
<line x1="442.9" x2="665.29" y1="917.45" y2="917.45" stroke="#b8b8b8" stroke-width="1.5" stroke-dasharray="1.9 9.27" stroke-dashoffset="-6.97"/>
<line x1="442.9" x2="665.29" y1="941.45" y2="941.45" stroke="#b8b8b8" stroke-width="1.5" stroke-dasharray="1.9 9.27" stroke-dashoffset="-6.97"/>
<line x1="694.45" x2="916.84" y1="917.45" y2="917.45" stroke="#b8b8b8" stroke-width="1.5" stroke-dasharray="1.9 9.27" stroke-dashoffset="-6.97"/>
<line x1="694.45" x2="916.84" y1="941.45" y2="941.45" stroke="#b8b8b8" stroke-width="1.5" stroke-dasharray="1.9 9.27" stroke-dashoffset="-6.97"/>
<line x1="0" x2="187.35" y1="948.1" y2="948.1" stroke="#b8b8b8" stroke-width="1.5" stroke-dasharray="1.9 9.27" stroke-dashoffset="-0.1"/>
<line x1="0" x2="187.35" y1="972.1" y2="972.1" stroke="#b8b8b8" stroke-width="1.5" stroke-dasharray="1.9 9.27" stroke-dashoffset="-0.1"/>
<line x1="266.81" x2="287.97" y1="948.1" y2="948.1" stroke="#b8b8b8" stroke-width="1.5" stroke-dasharray="1.9 9.27" stroke-dashoffset="-0.1"/>
<line x1="266.81" x2="287.97" y1="972.1" y2="972.1" stroke="#b8b8b8" stroke-width="1.5" stroke-dasharray="1.9 9.27" stroke-dashoffset="-0.1"/>
<line x1="417.74" x2="942" y1="948.1" y2="948.1" stroke="#b8b8b8" stroke-width="1.5" stroke-dasharray="1.9 9.27" stroke-dashoffset="-0.1"/>
<line x1="417.74" x2="942" y1="972.1" y2="972.1" stroke="#b8b8b8" stroke-width="1.5" stroke-dasharray="1.9 9.27" stroke-dashoffset="-0.1"/>
<line x1="1159.81" x2="1169" y1="948.1" y2="948.1" stroke="#b8b8b8" stroke-width="1.5" stroke-dasharray="1.9 9.27" stroke-dashoffset="-0.1"/>
<line x1="1159.81" x2="1169" y1="972.1" y2="972.1" stroke="#b8b8b8" stroke-width="1.5" stroke-dasharray="1.9 9.27" stroke-dashoffset="-0.1"/>
<line x1="0" x2="212.5" y1="978.75" y2="978.75" stroke="#b8b8b8" stroke-width="1.5" stroke-dasharray="1.9 9.27" stroke-dashoffset="-4.4"/>
<line x1="0" x2="212.5" y1="1002.75" y2="1002.75" stroke="#b8b8b8" stroke-width="1.5" stroke-dasharray="1.9 9.27" stroke-dashoffset="-4.4"/>
<line x1="241.66" x2="313.12" y1="978.75" y2="978.75" stroke="#b8b8b8" stroke-width="1.5" stroke-dasharray="1.9 9.27" stroke-dashoffset="-4.4"/>
<line x1="241.66" x2="313.12" y1="1002.75" y2="1002.75" stroke="#b8b8b8" stroke-width="1.5" stroke-dasharray="1.9 9.27" stroke-dashoffset="-4.4"/>
<line x1="392.59" x2="967.15" y1="978.75" y2="978.75" stroke="#b8b8b8" stroke-width="1.5" stroke-dasharray="1.9 9.27" stroke-dashoffset="-4.4"/>
<line x1="392.59" x2="967.15" y1="1002.75" y2="1002.75" stroke="#b8b8b8" stroke-width="1.5" stroke-dasharray="1.9 9.27" stroke-dashoffset="-4.4"/>
<line x1="996.31" x2="1169" y1="978.75" y2="978.75" stroke="#b8b8b8" stroke-width="1.5" stroke-dasharray="1.9 9.27" stroke-dashoffset="-4.4"/>
<line x1="996.31" x2="1169" y1="1002.75" y2="1002.75" stroke="#b8b8b8" stroke-width="1.5" stroke-dasharray="1.9 9.27" stroke-dashoffset="-4.4"/>
<line x1="0" x2="338.28" y1="1009.4" y2="1009.4" stroke="#b8b8b8" stroke-width="1.5" stroke-dasharray="1.9 9.27" stroke-dashoffset="-8.7"/>
<line x1="0" x2="338.28" y1="1033.4" y2="1033.4" stroke="#b8b8b8" stroke-width="1.5" stroke-dasharray="1.9 9.27" stroke-dashoffset="-8.7"/>
<line x1="367.43" x2="1169" y1="1009.4" y2="1009.4" stroke="#b8b8b8" stroke-width="1.5" stroke-dasharray="1.9 9.27" stroke-dashoffset="-8.7"/>
<line x1="367.43" x2="1169" y1="1033.4" y2="1033.4" stroke="#b8b8b8" stroke-width="1.5" stroke-dasharray="1.9 9.27" stroke-dashoffset="-8.7"/>
<path d="M-3.8 151.5H1194.55L1195.75 152.7V172.6L1194.55 173.8H-3.8L-5 172.6V152.7ZM-3.8 182.15H85.98L87.18 183.35V203.25L85.98 204.45H-3.8L-5 203.25V183.35ZM90.48 182.15H136.29L137.49 183.35V203.25L136.29 204.45H90.48L89.28 203.25V183.35ZM140.79 182.15H161.44L162.64 183.35V203.25L161.44 204.45H140.79L139.59 203.25V183.35ZM165.94 182.15H236.91L238.11 183.35V203.25L236.91 204.45H165.94L164.74 203.25V183.35ZM241.41 182.15H337.53L338.73 183.35V203.25L337.53 204.45H241.41L240.21 203.25V183.35ZM342.03 182.15H614.23L615.43 183.35V203.25L614.23 204.45H342.03L340.83 203.25V183.35ZM618.73 182.15H664.54L665.74 183.35V203.25L664.54 204.45H618.73L617.53 203.25V183.35ZM669.04 182.15H689.7L690.9 183.35V203.25L689.7 204.45H669.04L667.84 203.25V183.35ZM694.2 182.15H790.32L791.52 183.35V203.25L790.32 204.45H694.2L693 203.25V183.35ZM794.82 182.15H840.62L841.83 183.35V203.25L840.62 204.45H794.82L793.62 203.25V183.35ZM845.12 182.15H890.93L892.13 183.35V203.25L890.93 204.45H845.12L843.92 203.25V183.35ZM895.43 182.15H991.56L992.76 183.35V203.25L991.56 204.45H895.43L894.23 203.25V183.35ZM996.06 182.15H1194.55L1195.75 183.35V203.25L1194.55 204.45H996.06L994.86 203.25V183.35ZM-3.8 212.8H1155.06L1156.26 214V233.9L1155.06 235.1H-3.8L-5 233.9V214ZM1159.56 212.8H1194.55L1195.75 214V233.9L1194.55 235.1H1159.56L1158.36 233.9V214ZM190.85 274.1H238.66L239.86 275.3V295.2L238.66 296.4H190.85L189.65 295.2V275.3ZM291.47 274.1H867.53L868.73 275.3V295.2L867.53 296.4H291.47L290.27 295.2V275.3ZM970.65 274.1H1043.62L1044.82 275.3V295.2L1043.62 296.4H970.65L969.45 295.2V275.3ZM341.78 304.75H664.54L665.74 305.95V325.85L664.54 327.05H341.78L340.58 325.85V305.95ZM669.04 304.75H716.6L717.8 305.95V325.85L716.6 327.05H669.04L667.84 325.85V305.95ZM115.38 335.4H538.77L539.97 336.6V356.5L538.77 357.7H115.38L114.18 356.5V336.6ZM543.27 335.4H589.08L590.28 336.6V356.5L589.08 357.7H543.27L542.07 356.5V336.6ZM593.58 335.4H615.98L617.18 336.6V356.5L615.98 357.7H593.58L592.38 356.5V336.6ZM643.64 335.4H691.45L692.65 336.6V356.5L691.45 357.7H643.64L642.44 356.5V336.6ZM844.88 335.4H916.09L917.29 336.6V356.5L916.09 357.7H844.88L843.67 356.5V336.6ZM920.59 335.4H1056.19L1057.39 336.6V356.5L1056.19 357.7H920.59L919.39 356.5V336.6ZM140.54 366.05H211.75L212.95 367.25V387.15L211.75 388.35H140.54L139.34 387.15V367.25ZM216.25 366.05H263.81L265.01 367.25V387.15L263.81 388.35H216.25L215.05 387.15V367.25ZM568.17 366.05H766.91L768.11 367.25V387.15L766.91 388.35H568.17L566.97 387.15V367.25ZM316.62 396.7H815.47L816.67 397.9V417.8L815.47 419H316.62L315.42 417.8V397.9ZM819.97 396.7H1068.77L1069.97 397.9V417.8L1068.77 419H819.97L818.77 417.8V397.9ZM90.23 427.35H1081.35L1082.55 428.55V448.45L1081.35 449.65H90.23L89.03 448.45V428.55ZM794.57 458H890.93L892.13 459.2V479.1L890.93 480.3H794.57L793.37 479.1V459.2ZM895.43 458H993.31L994.51 459.2V479.1L993.31 480.3H895.43L894.23 479.1V459.2ZM165.69 488.65H741.76L742.96 489.85V509.75L741.76 510.95H165.69L164.49 509.75V489.85ZM945.5 488.65H1093.93L1095.13 489.85V509.75L1093.93 510.95H945.5L944.3 509.75V489.85ZM190.85 549.95H287.22L288.42 551.15V571.05L287.22 572.25H190.85L189.65 571.05V551.15ZM291.72 549.95H966.4L967.6 551.15V571.05L966.4 572.25H291.72L290.52 571.05V551.15ZM970.9 549.95H1155.06L1156.26 551.15V571.05L1155.06 572.25H970.9L969.7 571.05V551.15ZM1159.56 549.95H1194.55L1195.75 551.15V571.05L1194.55 572.25H1159.56L1158.36 571.05V551.15ZM341.78 580.6H664.54L665.74 581.8V601.7L664.54 602.9H341.78L340.58 601.7V581.8ZM669.04 580.6H1155.06L1156.26 581.8V601.7L1155.06 602.9H669.04L667.84 601.7V581.8ZM1159.56 580.6H1194.55L1195.75 581.8V601.7L1194.55 602.9H1159.56L1158.36 601.7V581.8ZM115.38 611.25H538.77L539.97 612.45V632.35L538.77 633.55H115.38L114.18 632.35V612.45ZM543.27 611.25H589.08L590.28 612.45V632.35L589.08 633.55H543.27L542.07 632.35V612.45ZM593.58 611.25H639.39L640.59 612.45V632.35L639.39 633.55H593.58L592.38 632.35V612.45ZM643.89 611.25H840.62L841.83 612.45V632.35L840.62 633.55H643.89L642.69 632.35V612.45ZM845.12 611.25H916.09L917.29 612.45V632.35L916.09 633.55H845.12L843.92 632.35V612.45ZM920.59 611.25H1155.06L1156.26 612.45V632.35L1155.06 633.55H920.59L919.39 632.35V612.45ZM1159.56 611.25H1194.55L1195.75 612.45V632.35L1194.55 633.55H1159.56L1158.36 632.35V612.45ZM140.54 641.9H211.75L212.95 643.1V663L211.75 664.2H140.54L139.34 663V643.1ZM216.25 641.9H563.92L565.12 643.1V663L563.92 664.2H216.25L215.05 663V643.1ZM568.42 641.9H1155.06L1156.26 643.1V663L1155.06 664.2H568.42L567.22 663V643.1ZM1159.56 641.9H1194.55L1195.75 643.1V663L1194.55 664.2H1159.56L1158.36 663V643.1ZM316.62 672.55H815.47L816.67 673.75V693.65L815.47 694.85H316.62L315.42 693.65V673.75ZM819.97 672.55H1155.06L1156.26 673.75V693.65L1155.06 694.85H819.97L818.77 693.65V673.75ZM1159.56 672.55H1194.55L1195.75 673.75V693.65L1194.55 694.85H1159.56L1158.36 693.65V673.75ZM90.23 703.2H1155.06L1156.26 704.4V724.3L1155.06 725.5H90.23L89.03 724.3V704.4ZM1159.56 703.2H1194.55L1195.75 704.4V724.3L1194.55 725.5H1159.56L1158.36 724.3V704.4ZM794.57 733.85H890.93L892.13 735.05V754.95L890.93 756.15H794.57L793.37 754.95V735.05ZM895.43 733.85H1155.06L1156.26 735.05V754.95L1155.06 756.15H895.43L894.23 754.95V735.05ZM1159.56 733.85H1194.55L1195.75 735.05V754.95L1194.55 756.15H1159.56L1158.36 754.95V735.05ZM165.69 764.5H941.25L942.45 765.7V785.6L941.25 786.8H165.69L164.49 785.6V765.7ZM945.75 764.5H1194.55L1195.75 765.7V785.6L1194.55 786.8H945.75L944.55 785.6V765.7ZM90.23 825.8H111.13L112.33 827V846.9L111.13 848.1H90.23L89.03 846.9V827ZM115.63 825.8H136.29L137.49 827V846.9L136.29 848.1H115.63L114.43 846.9V827ZM140.79 825.8H161.44L162.64 827V846.9L161.44 848.1H140.79L139.59 846.9V827ZM165.94 825.8H186.6L187.8 827V846.9L186.6 848.1H165.94L164.74 846.9V827ZM191.1 825.8H211.75L212.95 827V846.9L211.75 848.1H191.1L189.9 846.9V827ZM216.25 825.8H236.91L238.11 827V846.9L236.91 848.1H216.25L215.05 846.9V827ZM241.41 825.8H262.06L263.26 827V846.9L262.06 848.1H241.41L240.21 846.9V827ZM266.56 825.8H287.22L288.42 827V846.9L287.22 848.1H266.56L265.36 846.9V827ZM291.72 825.8H312.37L313.57 827V846.9L312.37 848.1H291.72L290.52 846.9V827ZM316.87 825.8H337.53L338.73 827V846.9L337.53 848.1H316.87L315.67 846.9V827ZM342.03 825.8H362.68L363.88 827V846.9L362.68 848.1H342.03L340.83 846.9V827ZM367.18 825.8H387.84L389.04 827V846.9L387.84 848.1H367.18L365.98 846.9V827ZM392.34 825.8H412.99L414.19 827V846.9L412.99 848.1H392.34L391.14 846.9V827ZM417.49 825.8H438.15L439.35 827V846.9L438.15 848.1H417.49L416.29 846.9V827ZM442.65 825.8H463.3L464.5 827V846.9L463.3 848.1H442.65L441.45 846.9V827ZM467.8 825.8H488.45L489.65 827V846.9L488.45 848.1H467.8L466.6 846.9V827ZM492.95 825.8H515.36L516.56 827V846.9L515.36 848.1H492.95L491.75 846.9V827ZM543.02 825.8H563.92L565.12 827V846.9L563.92 848.1H543.02L541.82 846.9V827ZM568.42 825.8H589.08L590.28 827V846.9L589.08 848.1H568.42L567.22 846.9V827ZM593.58 825.8H614.23L615.43 827V846.9L614.23 848.1H593.58L592.38 846.9V827ZM618.73 825.8H639.39L640.59 827V846.9L639.39 848.1H618.73L617.53 846.9V827ZM643.89 825.8H664.54L665.74 827V846.9L664.54 848.1H643.89L642.69 846.9V827ZM669.04 825.8H689.7L690.9 827V846.9L689.7 848.1H669.04L667.84 846.9V827ZM694.2 825.8H714.85L716.05 827V846.9L714.85 848.1H694.2L693 846.9V827ZM719.35 825.8H740.01L741.21 827V846.9L740.01 848.1H719.35L718.15 846.9V827ZM744.51 825.8H766.91L768.11 827V846.9L766.91 848.1H744.51L743.31 846.9V827ZM794.57 825.8H815.47L816.67 827V846.9L815.47 848.1H794.57L793.37 846.9V827ZM819.97 825.8H840.62L841.83 827V846.9L840.62 848.1H819.97L818.77 846.9V827ZM845.12 825.8H865.78L866.98 827V846.9L865.78 848.1H845.12L843.92 846.9V827ZM870.28 825.8H890.93L892.13 827V846.9L890.93 848.1H870.28L869.08 846.9V827ZM895.43 825.8H916.09L917.29 827V846.9L916.09 848.1H895.43L894.23 846.9V827ZM920.59 825.8H941.25L942.45 827V846.9L941.25 848.1H920.59L919.39 846.9V827ZM945.75 825.8H966.4L967.6 827V846.9L966.4 848.1H945.75L944.55 846.9V827ZM970.9 825.8H991.56L992.76 827V846.9L991.56 848.1H970.9L969.7 846.9V827ZM996.06 825.8H1155.06L1156.26 827V846.9L1155.06 848.1H996.06L994.86 846.9V827ZM1159.56 825.8H1194.55L1195.75 827V846.9L1194.55 848.1H1159.56L1158.36 846.9V827ZM115.38 856.45H136.29L137.49 857.65V877.55L136.29 878.75H115.38L114.18 877.55V857.65ZM140.79 856.45H161.44L162.64 857.65V877.55L161.44 878.75H140.79L139.59 877.55V857.65ZM165.94 856.45H186.6L187.8 857.65V877.55L186.6 878.75H165.94L164.74 877.55V857.65ZM191.1 856.45H211.75L212.95 857.65V877.55L211.75 878.75H191.1L189.9 877.55V857.65ZM216.25 856.45H236.91L238.11 857.65V877.55L236.91 878.75H216.25L215.05 877.55V857.65ZM241.41 856.45H262.06L263.26 857.65V877.55L262.06 878.75H241.41L240.21 877.55V857.65ZM266.56 856.45H287.22L288.42 857.65V877.55L287.22 878.75H266.56L265.36 877.55V857.65ZM291.72 856.45H312.37L313.57 857.65V877.55L312.37 878.75H291.72L290.52 877.55V857.65ZM316.87 856.45H337.53L338.73 857.65V877.55L337.53 878.75H316.87L315.67 877.55V857.65ZM342.03 856.45H362.68L363.88 857.65V877.55L362.68 878.75H342.03L340.83 877.55V857.65ZM367.18 856.45H387.84L389.04 857.65V877.55L387.84 878.75H367.18L365.98 877.55V857.65ZM392.34 856.45H412.99L414.19 857.65V877.55L412.99 878.75H392.34L391.14 877.55V857.65ZM417.49 856.45H438.15L439.35 857.65V877.55L438.15 878.75H417.49L416.29 877.55V857.65ZM442.65 856.45H463.3L464.5 857.65V877.55L463.3 878.75H442.65L441.45 877.55V857.65ZM467.8 856.45H490.2L491.4 857.65V877.55L490.2 878.75H467.8L466.6 877.55V857.65ZM568.17 856.45H589.08L590.28 857.65V877.55L589.08 878.75H568.17L566.97 877.55V857.65ZM593.58 856.45H614.23L615.43 857.65V877.55L614.23 878.75H593.58L592.38 877.55V857.65ZM618.73 856.45H639.39L640.59 857.65V877.55L639.39 878.75H618.73L617.53 877.55V857.65ZM643.89 856.45H664.54L665.74 857.65V877.55L664.54 878.75H643.89L642.69 877.55V857.65ZM669.04 856.45H689.7L690.9 857.65V877.55L689.7 878.75H669.04L667.84 877.55V857.65ZM694.2 856.45H714.85L716.05 857.65V877.55L714.85 878.75H694.2L693 877.55V857.65ZM719.35 856.45H741.76L742.96 857.65V877.55L741.76 878.75H719.35L718.15 877.55V857.65ZM819.72 856.45H840.62L841.83 857.65V877.55L840.62 878.75H819.72L818.52 877.55V857.65ZM845.12 856.45H865.78L866.98 857.65V877.55L865.78 878.75H845.12L843.92 877.55V857.65ZM870.28 856.45H890.93L892.13 857.65V877.55L890.93 878.75H870.28L869.08 877.55V857.65ZM895.43 856.45H916.09L917.29 857.65V877.55L916.09 878.75H895.43L894.23 877.55V857.65ZM920.59 856.45H941.25L942.45 857.65V877.55L941.25 878.75H920.59L919.39 877.55V857.65ZM945.75 856.45H966.4L967.6 857.65V877.55L966.4 878.75H945.75L944.55 877.55V857.65ZM970.9 856.45H991.56L992.76 857.65V877.55L991.56 878.75H970.9L969.7 877.55V857.65ZM996.06 856.45H1155.06L1156.26 857.65V877.55L1155.06 878.75H996.06L994.86 877.55V857.65ZM1159.56 856.45H1194.55L1195.75 857.65V877.55L1194.55 878.75H1159.56L1158.36 877.55V857.65ZM140.54 887.1H161.44L162.64 888.3V908.2L161.44 909.4H140.54L139.34 908.2V888.3ZM165.94 887.1H186.6L187.8 888.3V908.2L186.6 909.4H165.94L164.74 908.2V888.3ZM191.1 887.1H211.75L212.95 888.3V908.2L211.75 909.4H191.1L189.9 908.2V888.3ZM216.25 887.1H236.91L238.11 888.3V908.2L236.91 909.4H216.25L215.05 908.2V888.3ZM241.41 887.1H262.06L263.26 888.3V908.2L262.06 909.4H241.41L240.21 908.2V888.3ZM266.56 887.1H287.22L288.42 888.3V908.2L287.22 909.4H266.56L265.36 908.2V888.3ZM291.72 887.1H312.37L313.57 888.3V908.2L312.37 909.4H291.72L290.52 908.2V888.3ZM316.87 887.1H337.53L338.73 888.3V908.2L337.53 909.4H316.87L315.67 908.2V888.3ZM342.03 887.1H362.68L363.88 888.3V908.2L362.68 909.4H342.03L340.83 908.2V888.3ZM367.18 887.1H387.84L389.04 888.3V908.2L387.84 909.4H367.18L365.98 908.2V888.3ZM392.34 887.1H412.99L414.19 888.3V908.2L412.99 909.4H392.34L391.14 908.2V888.3ZM417.49 887.1H438.15L439.35 888.3V908.2L438.15 909.4H417.49L416.29 908.2V888.3ZM442.65 887.1H465.05L466.25 888.3V908.2L465.05 909.4H442.65L441.45 908.2V888.3ZM593.33 887.1H615.98L617.18 888.3V908.2L615.98 909.4H593.33L592.12 908.2V888.3ZM643.64 887.1H664.54L665.74 888.3V908.2L664.54 909.4H643.64L642.44 908.2V888.3ZM669.04 887.1H689.7L690.9 888.3V908.2L689.7 909.4H669.04L667.84 908.2V888.3ZM694.2 887.1H716.6L717.8 888.3V908.2L716.6 909.4H694.2L693 908.2V888.3ZM844.88 887.1H867.53L868.73 888.3V908.2L867.53 909.4H844.88L843.67 908.2V888.3ZM895.18 887.1H916.09L917.29 888.3V908.2L916.09 909.4H895.18L893.98 908.2V888.3ZM920.59 887.1H941.25L942.45 888.3V908.2L941.25 909.4H920.59L919.39 908.2V888.3ZM945.75 887.1H966.4L967.6 888.3V908.2L966.4 909.4H945.75L944.55 908.2V888.3ZM970.9 887.1H991.56L992.76 888.3V908.2L991.56 909.4H970.9L969.7 908.2V888.3ZM996.06 887.1H1155.06L1156.26 888.3V908.2L1155.06 909.4H996.06L994.86 908.2V888.3ZM1159.56 887.1H1194.55L1195.75 888.3V908.2L1194.55 909.4H1159.56L1158.36 908.2V888.3ZM165.69 917.75H186.6L187.8 918.95V938.85L186.6 940.05H165.69L164.49 938.85V918.95ZM191.1 917.75H211.75L212.95 918.95V938.85L211.75 940.05H191.1L189.9 938.85V918.95ZM216.25 917.75H236.91L238.11 918.95V938.85L236.91 940.05H216.25L215.05 938.85V918.95ZM241.41 917.75H262.06L263.26 918.95V938.85L262.06 940.05H241.41L240.21 938.85V918.95ZM266.56 917.75H287.22L288.42 918.95V938.85L287.22 940.05H266.56L265.36 938.85V918.95ZM291.72 917.75H312.37L313.57 918.95V938.85L312.37 940.05H291.72L290.52 938.85V918.95ZM316.87 917.75H337.53L338.73 918.95V938.85L337.53 940.05H316.87L315.67 938.85V918.95ZM342.03 917.75H362.68L363.88 918.95V938.85L362.68 940.05H342.03L340.83 938.85V918.95ZM367.18 917.75H387.84L389.04 918.95V938.85L387.84 940.05H367.18L365.98 938.85V918.95ZM392.34 917.75H412.99L414.19 918.95V938.85L412.99 940.05H392.34L391.14 938.85V918.95ZM417.49 917.75H439.9L441.1 918.95V938.85L439.9 940.05H417.49L416.29 938.85V918.95ZM668.79 917.75H691.45L692.65 918.95V938.85L691.45 940.05H668.79L667.59 938.85V918.95ZM920.34 917.75H941.25L942.45 918.95V938.85L941.25 940.05H920.34L919.14 938.85V918.95ZM945.75 917.75H966.4L967.6 918.95V938.85L966.4 940.05H945.75L944.55 938.85V918.95ZM970.9 917.75H991.56L992.76 918.95V938.85L991.56 940.05H970.9L969.7 938.85V918.95ZM996.06 917.75H1155.06L1156.26 918.95V938.85L1155.06 940.05H996.06L994.86 938.85V918.95ZM1159.56 917.75H1194.55L1195.75 918.95V938.85L1194.55 940.05H1159.56L1158.36 938.85V918.95ZM190.85 948.4H211.75L212.95 949.6V969.5L211.75 970.7H190.85L189.65 969.5V949.6ZM216.25 948.4H236.91L238.11 949.6V969.5L236.91 970.7H216.25L215.05 969.5V949.6ZM241.41 948.4H263.81L265.01 949.6V969.5L263.81 970.7H241.41L240.21 969.5V949.6ZM291.47 948.4H312.37L313.57 949.6V969.5L312.37 970.7H291.47L290.27 969.5V949.6ZM316.87 948.4H337.53L338.73 949.6V969.5L337.53 970.7H316.87L315.67 969.5V949.6ZM342.03 948.4H362.68L363.88 949.6V969.5L362.68 970.7H342.03L340.83 969.5V949.6ZM367.18 948.4H387.84L389.04 949.6V969.5L387.84 970.7H367.18L365.98 969.5V949.6ZM392.34 948.4H414.74L415.94 949.6V969.5L414.74 970.7H392.34L391.14 969.5V949.6ZM945.5 948.4H966.4L967.6 949.6V969.5L966.4 970.7H945.5L944.3 969.5V949.6ZM970.9 948.4H991.56L992.76 949.6V969.5L991.56 970.7H970.9L969.7 969.5V949.6ZM996.06 948.4H1156.81L1158.01 949.6V969.5L1156.81 970.7H996.06L994.86 969.5V949.6ZM216 979.05H238.66L239.86 980.25V1000.15L238.66 1001.35H216L214.8 1000.15V980.25ZM316.62 979.05H337.53L338.73 980.25V1000.15L337.53 1001.35H316.62L315.42 1000.15V980.25ZM342.03 979.05H362.68L363.88 980.25V1000.15L362.68 1001.35H342.03L340.83 1000.15V980.25ZM367.18 979.05H389.59L390.79 980.25V1000.15L389.59 1001.35H367.18L365.98 1000.15V980.25ZM970.65 979.05H993.31L994.51 980.25V1000.15L993.31 1001.35H970.65L969.45 1000.15V980.25ZM341.78 1009.7H364.43L365.63 1010.9V1030.8L364.43 1032H341.78L340.58 1030.8V1010.9ZM-3.8 1040.35H85.98L87.18 1041.55V1061.45L85.98 1062.65H-3.8L-5 1061.45V1041.55ZM90.48 1040.35H111.13L112.33 1041.55V1061.45L111.13 1062.65H90.48L89.28 1061.45V1041.55ZM115.63 1040.35H136.29L137.49 1041.55V1061.45L136.29 1062.65H115.63L114.43 1061.45V1041.55ZM140.79 1040.35H161.44L162.64 1041.55V1061.45L161.44 1062.65H140.79L139.59 1061.45V1041.55ZM165.94 1040.35H186.6L187.8 1041.55V1061.45L186.6 1062.65H165.94L164.74 1061.45V1041.55ZM191.1 1040.35H211.75L212.95 1041.55V1061.45L211.75 1062.65H191.1L189.9 1061.45V1041.55ZM216.25 1040.35H236.91L238.11 1041.55V1061.45L236.91 1062.65H216.25L215.05 1061.45V1041.55ZM241.41 1040.35H262.06L263.26 1041.55V1061.45L262.06 1062.65H241.41L240.21 1061.45V1041.55ZM266.56 1040.35H287.22L288.42 1041.55V1061.45L287.22 1062.65H266.56L265.36 1061.45V1041.55ZM291.72 1040.35H312.37L313.57 1041.55V1061.45L312.37 1062.65H291.72L290.52 1061.45V1041.55ZM316.87 1040.35H337.53L338.73 1041.55V1061.45L337.53 1062.65H316.87L315.67 1061.45V1041.55ZM342.03 1040.35H538.77L539.97 1041.55V1061.45L538.77 1062.65H342.03L340.83 1061.45V1041.55ZM543.27 1040.35H563.92L565.12 1041.55V1061.45L563.92 1062.65H543.27L542.07 1061.45V1041.55ZM568.42 1040.35H589.08L590.28 1041.55V1061.45L589.08 1062.65H568.42L567.22 1061.45V1041.55ZM593.58 1040.35H614.23L615.43 1041.55V1061.45L614.23 1062.65H593.58L592.38 1061.45V1041.55ZM618.73 1040.35H639.39L640.59 1041.55V1061.45L639.39 1062.65H618.73L617.53 1061.45V1041.55ZM643.89 1040.35H664.54L665.74 1041.55V1061.45L664.54 1062.65H643.89L642.69 1061.45V1041.55ZM669.04 1040.35H689.7L690.9 1041.55V1061.45L689.7 1062.65H669.04L667.84 1061.45V1041.55ZM694.2 1040.35H714.85L716.05 1041.55V1061.45L714.85 1062.65H694.2L693 1061.45V1041.55ZM719.35 1040.35H740.01L741.21 1041.55V1061.45L740.01 1062.65H719.35L718.15 1061.45V1041.55ZM744.51 1040.35H765.16L766.36 1041.55V1061.45L765.16 1062.65H744.51L743.31 1061.45V1041.55ZM769.66 1040.35H790.32L791.52 1041.55V1061.45L790.32 1062.65H769.66L768.46 1061.45V1041.55ZM794.82 1040.35H815.47L816.67 1041.55V1061.45L815.47 1062.65H794.82L793.62 1061.45V1041.55ZM819.97 1040.35H840.62L841.83 1041.55V1061.45L840.62 1062.65H819.97L818.77 1061.45V1041.55ZM845.12 1040.35H865.78L866.98 1041.55V1061.45L865.78 1062.65H845.12L843.92 1061.45V1041.55ZM870.28 1040.35H890.93L892.13 1041.55V1061.45L890.93 1062.65H870.28L869.08 1061.45V1041.55ZM895.43 1040.35H916.09L917.29 1041.55V1061.45L916.09 1062.65H895.43L894.23 1061.45V1041.55ZM920.59 1040.35H941.25L942.45 1041.55V1061.45L941.25 1062.65H920.59L919.39 1061.45V1041.55ZM945.75 1040.35H966.4L967.6 1041.55V1061.45L966.4 1062.65H945.75L944.55 1061.45V1041.55ZM970.9 1040.35H991.56L992.76 1041.55V1061.45L991.56 1062.65H970.9L969.7 1061.45V1041.55ZM996.06 1040.35H1194.55L1195.75 1041.55V1061.45L1194.55 1062.65H996.06L994.86 1061.45V1041.55Z" fill="none" stroke="#b8f2ae" stroke-width="1.6" stroke-linejoin="miter"/>
<path d="M87.83 242.8V265.65H112.98M112.98 242.8V265.65H138.14M138.14 242.8V265.65H163.29M163.29 242.8V265.65H188.45M188.45 242.8V265.65H213.6M213.6 242.8V265.65H238.76M289.07 242.8V265.65H314.22M314.22 242.8V265.65H339.38M339.38 242.8V265.65H540.62M540.62 242.8V265.65H565.77M565.77 242.8V265.65H590.93M590.93 242.8V265.65H616.08M641.24 242.8V265.65H666.39M666.39 242.8V265.65H691.55M792.17 242.8V265.65H817.32M817.32 242.8V265.65H842.48M842.48 242.8V265.65H867.63M892.78 242.8V265.65H917.94M917.94 242.8V265.65H943.1M943.1 242.8V265.65H968.25M968.25 242.8V265.65H993.41M87.83 518.65V541.5H112.98M112.98 518.65V541.5H138.14M138.14 518.65V541.5H163.29M163.29 518.65V541.5H188.45M188.45 518.65V541.5H213.6M213.6 518.65V541.5H289.07M289.07 518.65V541.5H314.22M314.22 518.65V541.5H339.38M339.38 518.65V541.5H540.62M540.62 518.65V541.5H565.77M565.77 518.65V541.5H590.93M590.93 518.65V541.5H641.24M641.24 518.65V541.5H666.39M666.39 518.65V541.5H792.17M792.17 518.65V541.5H817.32M817.32 518.65V541.5H842.48M842.48 518.65V541.5H892.78M892.78 518.65V541.5H917.94M917.94 518.65V541.5H943.1M943.1 518.65V541.5H968.25M968.25 518.65V541.5H1156.91M87.83 794.5V817.35H112.98M112.98 794.5V817.35H138.14M138.14 794.5V817.35H163.29M163.29 794.5V817.35H188.45M188.45 794.5V817.35H213.6M213.6 794.5V817.35H238.76M289.07 794.5V817.35H314.22M314.22 794.5V817.35H339.38M339.38 794.5V817.35H364.53M540.62 794.5V817.35H565.77M565.77 794.5V817.35H590.93M590.93 794.5V817.35H616.08M641.24 794.5V817.35H666.39M666.39 794.5V817.35H691.55M792.17 794.5V817.35H817.32M817.32 794.5V817.35H842.48M842.48 794.5V817.35H867.63M892.78 794.5V817.35H917.94M917.94 794.5V817.35H943.1M943.1 794.5V817.35H968.25M968.25 794.5V817.35H993.41" fill="none" stroke="#ffffff" stroke-width="1.7"/>
<path d="M0.6 242.8V265.65H87.83M238.76 242.8V265.65H263.91M263.91 242.8V265.65H289.07M616.08 242.8V265.65H641.24M691.55 242.8V265.65H716.7M716.7 242.8V265.65H741.86M741.86 242.8V265.65H767.01M767.01 242.8V265.65H792.17M867.63 242.8V265.65H892.78M993.41 242.8V265.65H1043.72M1043.72 242.8V265.65H1056.29M1056.29 242.8V265.65H1068.87M1068.87 242.8V265.65H1081.45M1081.45 242.8V265.65H1094.03M1094.03 242.8V265.65H1156.91M1156.91 242.8V265.65H1171M0.6 794.5V817.35H87.83M238.76 794.5V817.35H263.91M263.91 794.5V817.35H289.07M364.53 794.5V817.35H389.69M389.69 794.5V817.35H414.84M414.84 794.5V817.35H440M440 794.5V817.35H465.15M465.15 794.5V817.35H490.3M490.3 794.5V817.35H515.46M515.46 794.5V817.35H540.62M616.08 794.5V817.35H641.24M691.55 794.5V817.35H716.7M716.7 794.5V817.35H741.86M741.86 794.5V817.35H767.01M767.01 794.5V817.35H792.17M867.63 794.5V817.35H892.78M993.41 794.5V817.35H1156.91M1156.91 794.5V817.35H1171" fill="none" stroke="#ff0000" stroke-width="1.7"/>
<path d="M0.6 518.65V541.5H87.83" fill="none" stroke="#00f400" stroke-width="1.7"/>
<path d="M1156.91 518.65V541.5H1171" fill="none" stroke="#fff000" stroke-width="1.7"/>
<text x="-1" y="168.4">@C@1</text>
<text x="-1" y="199.05">1</text>
<text x="91.63" y="199.05">0</text>
<text x="141.94" y="199.05">1</text>
<text x="167.09" y="199.05">0</text>
<text x="242.56" y="199.05">1</text>
<text x="343.18" y="199.05">0</text>
<text x="619.88" y="199.05">1</text>
<text x="670.19" y="199.05">0</text>
<text x="695.35" y="199.05">1</text>
<text x="795.97" y="199.05">0</text>
<text x="846.27" y="199.05">1</text>
<text x="896.58" y="199.05">0</text>
<text x="997.21" y="199.05">1</text>
<text x="-1" y="229.7">0</text>
<text x="1160.71" y="229.7">1</text>
<text x="187.75" y="291">@tr*</text>
<text x="292.87" y="291">@transaction@340</text>
<text x="967.55" y="291">@tran*</text>
<text x="343.18" y="321.65">@transaction@342</text>
<text x="665.69" y="321.65">@tr*</text>
<text x="116.78" y="352.3">@transaction@333</text>
<text x="539.92" y="352.3">@tr*</text>
<text x="590.23" y="352.3">@*</text>
<text x="640.54" y="352.3">@tr*</text>
<text x="841.77" y="352.3">@tran*</text>
<text x="917.24" y="352.3">@transacti*</text>
<text x="137.44" y="382.95">@tran*</text>
<text x="212.9" y="382.95">@tr*</text>
<text x="565.37" y="382.95">@transaction@344</text>
<text x="318.02" y="413.6">@transaction@341</text>
<text x="821.12" y="413.6">@transaction@354</text>
<text x="91.63" y="444.25">@transaction@332</text>
<text x="791.47" y="474.9">@transa*</text>
<text x="892.08" y="474.9">@transa*</text>
<text x="167.09" y="505.55">@transaction@335</text>
<text x="942.4" y="505.55">@transactio*</text>
<text x="187.75" y="566.85">@transa*</text>
<text x="292.87" y="566.85">@transaction@340</text>
<text x="967.55" y="566.85">@transaction@3*</text>
<text x="1157.11" y="566.85">@</text>
<text x="343.18" y="597.5">@transaction@342</text>
<text x="670.19" y="597.5">@transaction@348</text>
<text x="1157.11" y="597.5">@</text>
<text x="116.78" y="628.15">@transaction@333</text>
<text x="539.92" y="628.15">@tr*</text>
<text x="590.23" y="628.15">@tr*</text>
<text x="640.84" y="628.15">@transaction@347</text>
<text x="841.77" y="628.15">@tran*</text>
<text x="921.74" y="628.15">@transaction@358</text>
<text x="1157.11" y="628.15">@</text>
<text x="137.44" y="658.8">@tran*</text>
<text x="217.4" y="658.8">@transaction@337</text>
<text x="569.57" y="658.8">@transaction@344</text>
<text x="1157.11" y="658.8">@</text>
<text x="318.02" y="689.45">@transaction@341</text>
<text x="821.12" y="689.45">@transaction@354</text>
<text x="1157.11" y="689.45">@</text>
<text x="91.63" y="720.1">@transaction@332</text>
<text x="1157.11" y="720.1">@</text>
<text x="791.47" y="750.75">@transa*</text>
<text x="896.58" y="750.75">@transaction@357</text>
<text x="1157.11" y="750.75">@</text>
<text x="167.09" y="781.4">@transaction@335</text>
<text x="946.9" y="781.4">@transaction@359</text>
<text x="87.13" y="842.7">@*</text>
<text x="112.28" y="842.7">@*</text>
<text x="137.44" y="842.7">@*</text>
<text x="162.59" y="842.7">@*</text>
<text x="187.75" y="842.7">@*</text>
<text x="212.9" y="842.7">@*</text>
<text x="238.06" y="842.7">@*</text>
<text x="263.21" y="842.7">@*</text>
<text x="288.37" y="842.7">@*</text>
<text x="313.52" y="842.7">@*</text>
<text x="338.68" y="842.7">@*</text>
<text x="363.83" y="842.7">@*</text>
<text x="388.99" y="842.7">@*</text>
<text x="414.14" y="842.7">@*</text>
<text x="439.3" y="842.7">@*</text>
<text x="464.45" y="842.7">@*</text>
<text x="489.6" y="842.7">@*</text>
<text x="539.92" y="842.7">@*</text>
<text x="565.07" y="842.7">@*</text>
<text x="590.23" y="842.7">@*</text>
<text x="615.38" y="842.7">@*</text>
<text x="640.54" y="842.7">@*</text>
<text x="665.69" y="842.7">@*</text>
<text x="690.85" y="842.7">@*</text>
<text x="716" y="842.7">@*</text>
<text x="741.16" y="842.7">@*</text>
<text x="791.47" y="842.7">@*</text>
<text x="816.62" y="842.7">@*</text>
<text x="841.77" y="842.7">@*</text>
<text x="866.93" y="842.7">@*</text>
<text x="892.08" y="842.7">@*</text>
<text x="917.24" y="842.7">@*</text>
<text x="942.4" y="842.7">@*</text>
<text x="967.55" y="842.7">@*</text>
<text x="992.71" y="842.7">@transaction*</text>
<text x="1157.11" y="842.7">@</text>
<text x="112.28" y="873.35">@*</text>
<text x="137.44" y="873.35">@*</text>
<text x="162.59" y="873.35">@*</text>
<text x="187.75" y="873.35">@*</text>
<text x="212.9" y="873.35">@*</text>
<text x="238.06" y="873.35">@*</text>
<text x="263.21" y="873.35">@*</text>
<text x="288.37" y="873.35">@*</text>
<text x="313.52" y="873.35">@*</text>
<text x="338.68" y="873.35">@*</text>
<text x="363.83" y="873.35">@*</text>
<text x="388.99" y="873.35">@*</text>
<text x="414.14" y="873.35">@*</text>
<text x="439.3" y="873.35">@*</text>
<text x="464.45" y="873.35">@*</text>
<text x="565.07" y="873.35">@*</text>
<text x="590.23" y="873.35">@*</text>
<text x="615.38" y="873.35">@*</text>
<text x="640.54" y="873.35">@*</text>
<text x="665.69" y="873.35">@*</text>
<text x="690.85" y="873.35">@*</text>
<text x="716" y="873.35">@*</text>
<text x="816.62" y="873.35">@*</text>
<text x="841.77" y="873.35">@*</text>
<text x="866.93" y="873.35">@*</text>
<text x="892.08" y="873.35">@*</text>
<text x="917.24" y="873.35">@*</text>
<text x="942.4" y="873.35">@*</text>
<text x="967.55" y="873.35">@*</text>
<text x="992.71" y="873.35">@transaction*</text>
<text x="1157.11" y="873.35">@</text>
<text x="137.44" y="904">@*</text>
<text x="162.59" y="904">@*</text>
<text x="187.75" y="904">@*</text>
<text x="212.9" y="904">@*</text>
<text x="238.06" y="904">@*</text>
<text x="263.21" y="904">@*</text>
<text x="288.37" y="904">@*</text>
<text x="313.52" y="904">@*</text>
<text x="338.68" y="904">@*</text>
<text x="363.83" y="904">@*</text>
<text x="388.99" y="904">@*</text>
<text x="414.14" y="904">@*</text>
<text x="439.3" y="904">@*</text>
<text x="590.23" y="904">@*</text>
<text x="640.54" y="904">@*</text>
<text x="665.69" y="904">@*</text>
<text x="690.85" y="904">@*</text>
<text x="841.77" y="904">@*</text>
<text x="892.08" y="904">@*</text>
<text x="917.24" y="904">@*</text>
<text x="942.4" y="904">@*</text>
<text x="967.55" y="904">@*</text>
<text x="992.71" y="904">@transaction*</text>
<text x="1157.11" y="904">@</text>
<text x="162.59" y="934.65">@*</text>
<text x="187.75" y="934.65">@*</text>
<text x="212.9" y="934.65">@*</text>
<text x="238.06" y="934.65">@*</text>
<text x="263.21" y="934.65">@*</text>
<text x="288.37" y="934.65">@*</text>
<text x="313.52" y="934.65">@*</text>
<text x="338.68" y="934.65">@*</text>
<text x="363.83" y="934.65">@*</text>
<text x="388.99" y="934.65">@*</text>
<text x="414.14" y="934.65">@*</text>
<text x="665.69" y="934.65">@*</text>
<text x="917.24" y="934.65">@*</text>
<text x="942.4" y="934.65">@*</text>
<text x="967.55" y="934.65">@*</text>
<text x="992.71" y="934.65">@transaction*</text>
<text x="1157.11" y="934.65">@</text>
<text x="187.75" y="965.3">@*</text>
<text x="212.9" y="965.3">@*</text>
<text x="238.06" y="965.3">@*</text>
<text x="288.37" y="965.3">@*</text>
<text x="313.52" y="965.3">@*</text>
<text x="338.68" y="965.3">@*</text>
<text x="363.83" y="965.3">@*</text>
<text x="388.99" y="965.3">@*</text>
<text x="942.4" y="965.3">@*</text>
<text x="967.55" y="965.3">@*</text>
<text x="992.71" y="965.3">@transaction*</text>
<text x="212.9" y="995.95">@*</text>
<text x="313.52" y="995.95">@*</text>
<text x="338.68" y="995.95">@*</text>
<text x="363.83" y="995.95">@*</text>
<text x="967.55" y="995.95">@*</text>
<text x="338.68" y="1026.6">@*</text>
<text x="-1.1" y="1057.25">@trans*</text>
<text x="87.13" y="1057.25">@*</text>
<text x="112.28" y="1057.25">@*</text>
<text x="137.44" y="1057.25">@*</text>
<text x="162.59" y="1057.25">@*</text>
<text x="187.75" y="1057.25">@*</text>
<text x="212.9" y="1057.25">@*</text>
<text x="238.06" y="1057.25">@*</text>
<text x="263.21" y="1057.25">@*</text>
<text x="288.37" y="1057.25">@*</text>
<text x="313.52" y="1057.25">@*</text>
<text x="338.98" y="1057.25">@transaction@342</text>
<text x="539.92" y="1057.25">@*</text>
<text x="565.07" y="1057.25">@*</text>
<text x="590.23" y="1057.25">@*</text>
<text x="615.38" y="1057.25">@*</text>
<text x="640.54" y="1057.25">@*</text>
<text x="665.69" y="1057.25">@*</text>
<text x="690.85" y="1057.25">@*</text>
<text x="716" y="1057.25">@*</text>
<text x="741.16" y="1057.25">@*</text>
<text x="766.31" y="1057.25">@*</text>
<text x="791.47" y="1057.25">@*</text>
<text x="816.62" y="1057.25">@*</text>
<text x="841.77" y="1057.25">@*</text>
<text x="866.93" y="1057.25">@*</text>
<text x="892.08" y="1057.25">@*</text>
<text x="917.24" y="1057.25">@*</text>
<text x="942.4" y="1057.25">@*</text>
<text x="967.55" y="1057.25">@*</text>
<text x="997.21" y="1057.25">@transaction@361</text>
</svg>
<div class="ann" style="top:321px;height:58.7px;line-height:61.7px;font-size:31.4px;letter-spacing:0.5px">Associative Array</div>
<div class="ann" style="top:612px;height:57.6px;line-height:60.6px;font-size:31.4px;letter-spacing:0.8px">Dynamic Array</div>
<div class="ann" style="top:901.3px;height:58.8px;line-height:61.8px;font-size:31.4px;letter-spacing:0.8px">Queue</div>
<svg width="500" height="120" viewBox="60 850 500 120" style="position:absolute;left:60px;top:850px"><rect x="78" y="901.5" width="461" height="58.5" fill="none" stroke="#555" stroke-width="0.9" stroke-dasharray="2.2 1.6"/><path d="M308.9 876V897" stroke="#555" stroke-width="1.1"/><circle cx="78" cy="901.6" r="4.7" fill="#fff" stroke="#4c4c4c" stroke-width="1.3"/><circle cx="308.8" cy="901.6" r="4.7" fill="#fff" stroke="#4c4c4c" stroke-width="1.3"/><circle cx="539" cy="901.6" r="4.7" fill="#fff" stroke="#4c4c4c" stroke-width="1.3"/><circle cx="78" cy="931" r="4.7" fill="#fff" stroke="#4c4c4c" stroke-width="1.3"/><circle cx="539" cy="931" r="4.7" fill="#fff" stroke="#4c4c4c" stroke-width="1.3"/><circle cx="78" cy="960" r="4.7" fill="#fff" stroke="#4c4c4c" stroke-width="1.3"/><circle cx="308.8" cy="960" r="4.7" fill="#fff" stroke="#4c4c4c" stroke-width="1.3"/><circle cx="539" cy="960" r="4.7" fill="#fff" stroke="#4c4c4c" stroke-width="1.3"/><circle cx="309" cy="867.3" r="9.6" fill="#7c7e7b"/><path d="M316.3 867.3A7.3 7.3 0 1 0 313.2 873.3" fill="none" stroke="#4a4a4a" stroke-width="3.8"/><path d="M312 866.4H322.4L317.2 872.6Z" fill="#4a4a4a"/><path d="M316.3 867.3A7.3 7.3 0 1 0 313.2 873.3" fill="none" stroke="#fff" stroke-width="2.1"/><path d="M313.4 867.2H321L317.2 871.6Z" fill="#fff"/></svg>
</div></body></html>
